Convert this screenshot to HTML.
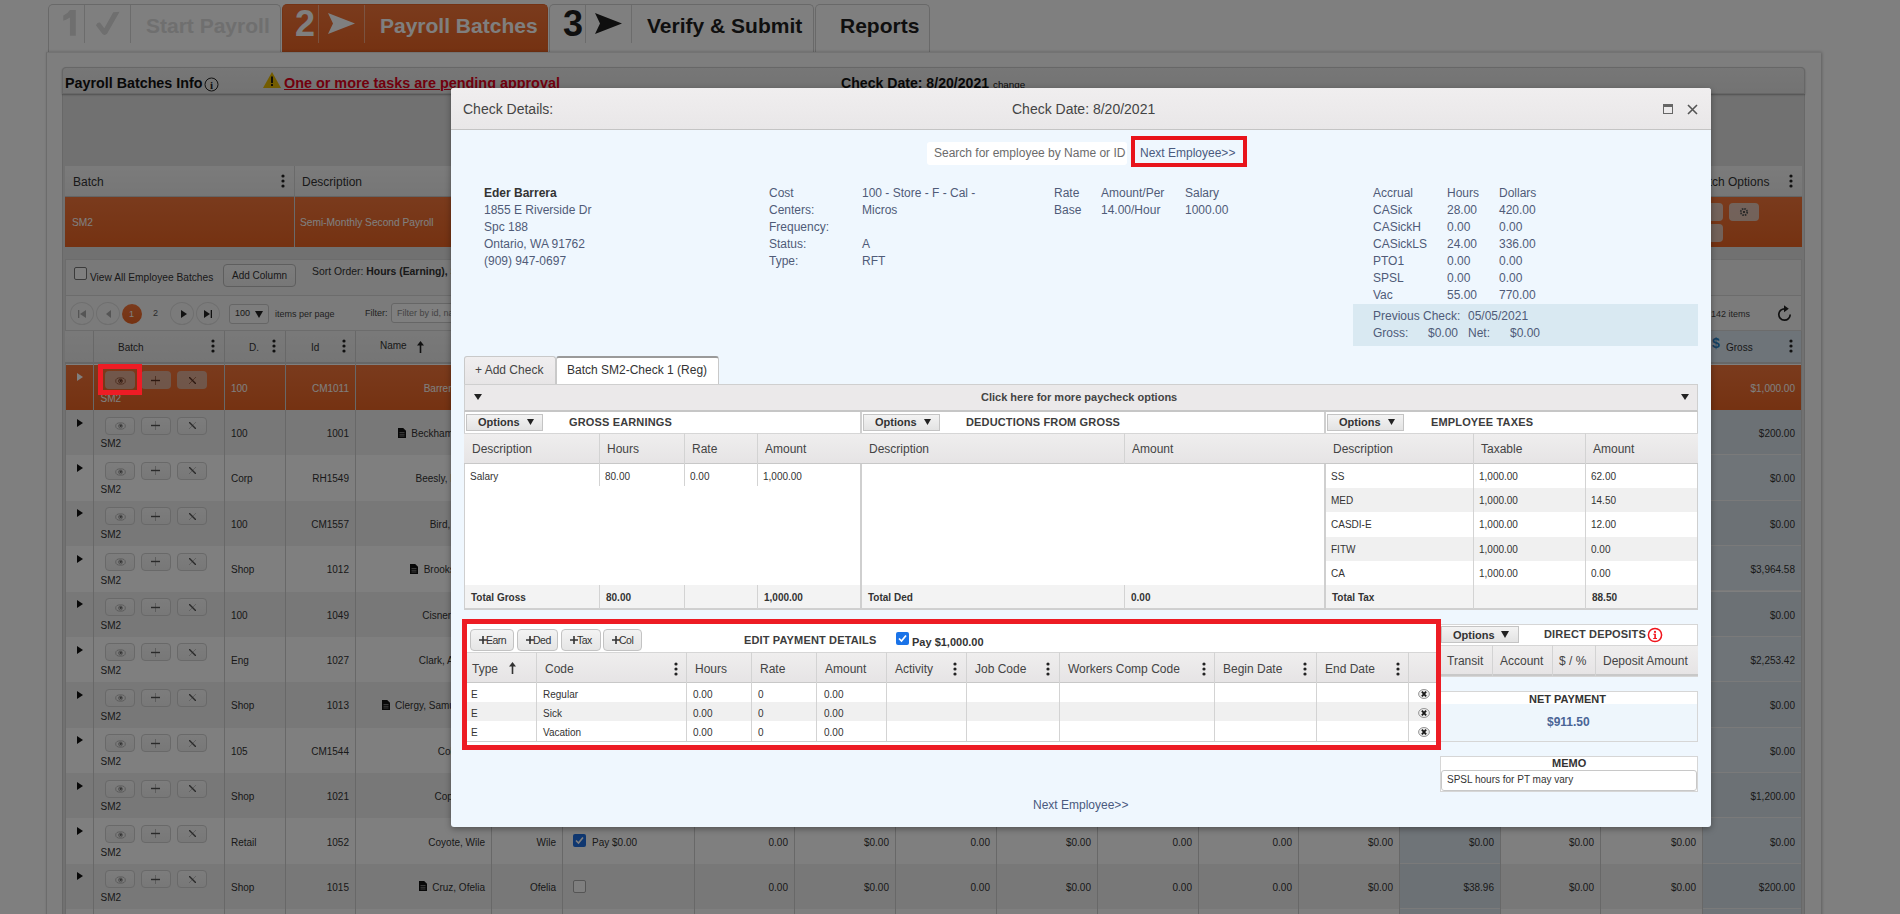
<!DOCTYPE html><html><head><meta charset="utf-8"><style>
*{box-sizing:border-box;margin:0;padding:0}
html,body{width:1900px;height:914px;overflow:hidden;background:#fff;font-family:"Liberation Sans",sans-serif;color:#333}
.a{position:absolute}
.t{position:absolute;white-space:nowrap;line-height:1}
.bg{position:absolute;left:0;top:0;width:1900px;height:914px;overflow:hidden}
.ov{position:absolute;left:0;top:0;width:1900px;height:914px;background:rgba(0,0,0,0.5)}
.tab{position:absolute;top:4px;height:48px;border:1px solid #d2d2d2;border-bottom:none;border-radius:5px 5px 0 0;background:#fff}
.tab .num{position:absolute;top:1px;font:bold 36px "Liberation Sans";line-height:1}
.tab .dv{position:absolute;top:0px;width:1px;height:38px;background:#d0d0d0}
.tab .lbl{position:absolute;top:10px;font:bold 21px "Liberation Sans";line-height:1}
.orange{background:linear-gradient(#f5763a,#ea6424)}
.modal{position:absolute;left:451px;top:88px;width:1260px;height:739px;background:#eff7fe;border-radius:3px;box-shadow:0 2px 6px rgba(0,0,0,0.35);overflow:hidden}
.mh{position:absolute;left:0;top:0;width:1260px;height:42px;background:linear-gradient(#f0eeef,#e9e7e8);border-bottom:1px solid #c4c4c4}
.info{font:12px "Liberation Sans";color:#4f5b78}
.th{position:absolute;background:linear-gradient(#efeded,#e6e4e5);border-bottom:1px solid #c9c9c9;font:12px "Liberation Sans";color:#444}
.btn{position:absolute;border:1px solid #bdbdbd;border-radius:4px;background:linear-gradient(#f4f4f4,#e4e4e4)}
</style></head><body>
<div class="bg">
<div class="tab" style="left:48px;width:233px;">
<svg class="a" style="left:0;top:0" width="40" height="40" viewBox="0 0 40 40"><path d="M20.9 4.9 H26.8 V30.7 H20.9 V12.5 Q17.5 14.8 14.3 15.8 V10.6 Q18.5 8.8 20.9 4.9 Z" fill="#dedede"/></svg>
<div class="dv" style="left:35px;background:#d8d8d8"></div>
<div class="dv" style="left:81px;background:#d8d8d8"></div>
<svg class="a" style="left:47px;top:6px" width="24" height="25" viewBox="0 0 24 25"><path d="M0 14.5 Q1 11 4 11.5 L8.3 17.3 L17.2 1.3 L23.6 0.8 L11.2 22.6 Q9 25 6.5 23 Z" fill="#dedede"/></svg>
<div class="lbl" style="left:97px;color:#dedede">Start Payroll</div>
</div>
<div class="tab orange" style="left:282px;width:266px;border-color:#e8662a;">
<div class="num" style="left:12px;color:#ffffff">2</div>
<div class="dv" style="left:35px;background:rgba(255,255,255,0.4)"></div>
<div class="dv" style="left:81px;background:rgba(255,255,255,0.4)"></div>
<svg class="a" style="left:45px;top:8px" width="27" height="21" viewBox="0 0 27 21"><path d="M0 0 L27 10.5 L0 21 L5 10.5 Z" fill="#ffffff"/></svg>
<div class="lbl" style="left:97px;color:#ffffff">Payroll Batches</div>
</div>
<div class="tab" style="left:549px;width:265px;">
<div class="num" style="left:13px;color:#1e1e1e">3</div>
<div class="dv" style="left:35px;background:#d8d8d8"></div>
<div class="dv" style="left:81px;background:#d8d8d8"></div>
<svg class="a" style="left:45px;top:8px" width="27" height="21" viewBox="0 0 27 21"><path d="M0 0 L27 10.5 L0 21 L5 10.5 Z" fill="#1e1e1e"/></svg>
<div class="lbl" style="left:97px;color:#1e1e1e">Verify &amp; Submit</div>
</div>
<div class="tab" style="left:815px;width:115px;">
<div class="lbl" style="left:24px;color:#1e1e1e">Reports</div>
</div>
<div class="a" style="left:46px;top:52px;width:1775px;height:870px;background:#fdfdfd;border-left:1px solid #d8d8d8;border-top:1px solid #e6e6e6;box-shadow:1px 0 3px rgba(0,0,0,0.25)"></div>
<div class="a" style="left:62px;top:67px;width:1743px;height:860px;background:#e3e3e3;border:1px solid #d0d0d0;border-radius:4px 4px 0 0"></div>
<div class="a" style="left:62px;top:67px;width:1743px;height:27px;background:linear-gradient(#eeeeee,#e6e6e6);border:1px solid #cfcfcf;border-radius:4px 4px 0 0;box-shadow:0 1px 2px rgba(0,0,0,0.3)"></div>
<div class="t" style="left:65px;top:75px;font:bold 14.3px 'Liberation Sans';color:#111;">Payroll Batches Info</div>
<svg class="a" style="left:204px;top:77px" width="15" height="15" viewBox="0 0 15 15"><circle cx="7.5" cy="7.5" r="6.5" fill="none" stroke="#222" stroke-width="1"/><text x="7.5" y="12" text-anchor="middle" font-family="Liberation Serif" font-size="11" font-weight="bold" fill="#222">i</text></svg>
<svg class="a" style="left:263px;top:72px" width="18" height="16" viewBox="0 0 18 16"><path d="M9 0 L18 16 L0 16 Z" fill="#e6b800"/><rect x="8.1" y="4.5" width="1.8" height="6.5" fill="#111"/><rect x="8.1" y="12" width="1.8" height="2" fill="#111"/></svg>
<div class="t" style="left:284px;top:75px;font:bold 14.4px 'Liberation Sans';color:#e3001b;text-decoration:underline">One or more tasks are pending approval</div>
<div class="t" style="left:841px;top:75px;font:bold 14.1px 'Liberation Sans';color:#111;">Check Date: 8/20/2021 <span style="font:normal 9.8px 'Liberation Sans'">change</span></div>
<div class="a" style="left:65px;top:166px;width:1737px;height:81px;background:#fff;border:1px solid #d5d5d5"></div>
<div class="th" style="left:65px;top:166px;width:1737px;height:31px;background:linear-gradient(#f7f7f7,#ededed)"></div>
<div class="t" style="left:73px;top:175px;font:12px 'Liberation Sans';color:#333;">Batch</div>
<div class="t" style="left:302px;top:175px;font:12px 'Liberation Sans';color:#333;">Description</div>
<div class="t" style="left:1694px;top:175px;font:12px 'Liberation Sans';color:#333;">Batch Options</div>
<svg class="a" style="left:281px;top:174px" width="4" height="14" viewBox="0 0 4 14"><circle cx="2" cy="2" r="1.6" fill="#222"/><circle cx="2" cy="7" r="1.6" fill="#222"/><circle cx="2" cy="12" r="1.6" fill="#222"/></svg>
<svg class="a" style="left:1789px;top:174px" width="4" height="14" viewBox="0 0 4 14"><circle cx="2" cy="2" r="1.6" fill="#222"/><circle cx="2" cy="7" r="1.6" fill="#222"/><circle cx="2" cy="12" r="1.6" fill="#222"/></svg>
<div class="a orange" style="left:65px;top:197px;width:1737px;height:50px"></div>
<div class="a" style="left:294px;top:166px;width:1px;height:81px;background:#d5d5d5"></div>
<div class="t" style="left:72px;top:217px;font:10.2px 'Liberation Sans';color:#fff;">SM2</div>
<div class="t" style="left:300px;top:217px;font:10.2px 'Liberation Sans';color:#fff;">Semi-Monthly Second Payroll</div>
<div class="a" style="left:1693px;top:203px;width:30px;height:18px;border-radius:4px;background:rgba(225,225,225,0.75)"></div>
<div class="a" style="left:1729px;top:203px;width:30px;height:18px;border-radius:4px;background:rgba(225,225,225,0.75)"></div>
<div class="a" style="left:1693px;top:224px;width:30px;height:18px;border-radius:4px;background:rgba(225,225,225,0.75)"></div>
<svg class="a" style="left:1739px;top:207px" width="10" height="10" viewBox="0 0 10 10"><circle cx="5" cy="5" r="3.2" fill="none" stroke="#555" stroke-width="1.8" stroke-dasharray="1.6 0.9"/><circle cx="5" cy="5" r="1.1" fill="#333"/></svg>
<div class="a" style="left:65px;top:259px;width:1737px;height:37px;background:#f2f2f2;border:1px solid #d8d8d8"></div>
<div class="a" style="left:74px;top:267px;width:13px;height:13px;background:#fff;border:1px solid #777;border-radius:2px"></div>
<div class="t" style="left:90px;top:272px;font:10.2px 'Liberation Sans';color:#333;">View All Employee Batches</div>
<div class="btn" style="left:223px;top:264px;width:73px;height:23px;background:linear-gradient(#fafafa,#efefef)"></div>
<div class="t" style="left:232px;top:270px;font:10px 'Liberation Sans';color:#333;">Add Column</div>
<div class="t" style="left:312px;top:266px;font:10.4px 'Liberation Sans';color:#333;">Sort Order: <b>Hours (Earning), Sick</b></div>
<div class="a" style="left:65px;top:296px;width:1737px;height:35px;background:#f7f7f7;border:1px solid #d8d8d8;border-top:none"></div>
<div class="a" style="left:70px;top:302px;width:24px;height:23px;border-radius:50%;border:1px solid #dedede"></div>
<div class="a" style="left:96px;top:302px;width:24px;height:23px;border-radius:50%;border:1px solid #dedede"></div>
<div class="a" style="left:170px;top:302px;width:24px;height:23px;border-radius:50%;border:1px solid #dedede"></div>
<div class="a" style="left:196px;top:302px;width:24px;height:23px;border-radius:50%;border:1px solid #dedede"></div>
<svg class="a" style="left:77px;top:309px" width="10" height="10" viewBox="0 0 10 10"><rect x="1" y="1" width="1.3" height="8" fill="#aaa"/><path d="M9 1 L3 5 L9 9Z" fill="#aaa"/></svg>
<svg class="a" style="left:104px;top:309px" width="10" height="10" viewBox="0 0 10 10"><path d="M7 1 L2 5 L7 9Z" fill="#aaa"/></svg>
<div class="a orange" style="left:122px;top:304px;width:20px;height:20px;border-radius:50%"></div>
<div class="t" style="left:129px;top:309px;font:9px 'Liberation Sans';color:#fff;">1</div>
<div class="t" style="left:153px;top:308px;font:9px 'Liberation Sans';color:#555;">2</div>
<svg class="a" style="left:179px;top:309px" width="10" height="10" viewBox="0 0 10 10"><path d="M2 1 L8 5 L2 9Z" fill="#222"/></svg>
<svg class="a" style="left:203px;top:309px" width="10" height="10" viewBox="0 0 10 10"><path d="M1 1 L7 5 L1 9Z" fill="#222"/><rect x="7.7" y="1" width="1.3" height="8" fill="#222"/></svg>
<div class="a" style="left:229px;top:304px;width:40px;height:20px;border:1px solid #ccc;border-radius:3px;background:#fafafa"></div>
<div class="t" style="left:235px;top:308px;font:9px 'Liberation Sans';color:#333;">100</div>
<svg class="a" style="left:255px;top:311px" width="8" height="7" viewBox="0 0 8 7"><path d="M0 0 L8 0 L4 7Z" fill="#222"/></svg>
<div class="t" style="left:275px;top:309px;font:9px 'Liberation Sans';color:#444;">items per page</div>
<div class="t" style="left:365px;top:308px;font:9px 'Liberation Sans';color:#444;">Filter:</div>
<div class="a" style="left:391px;top:303px;width:200px;height:20px;border:1px solid #ccc;border-radius:3px;background:#fff"></div>
<div class="t" style="left:397px;top:308px;font:9px 'Liberation Sans';color:#888;">Filter by id, name</div>
<div class="t" style="right:150px;top:309px;font:9px 'Liberation Sans';color:#444;">1 - 100 of 142 items</div>
<svg class="a" style="left:1777px;top:305px" width="16" height="17" viewBox="0 0 16 17"><path d="M13.2 9.5 A5.7 5.7 0 1 1 8 3.8" fill="none" stroke="#222" stroke-width="1.7"/><path d="M7 0.3 L11.8 3.8 L7 7.3Z" fill="#222"/></svg>
<div class="a" style="left:65px;top:331px;width:1737px;height:600px;background:#fff;border-left:1px solid #d5d5d5"></div>
<div class="th" style="left:65px;top:331px;width:1737px;height:33px;background:linear-gradient(#f3f3f3,#ebebeb);border-bottom:2px solid #cfcfcf"></div>
<div class="a" style="left:1399px;top:331px;width:101px;height:31px;background:#dce8f2"></div>
<div class="a" style="left:1702px;top:331px;width:99px;height:31px;background:#dce8f2"></div>
<div class="t" style="left:118px;top:342px;font:10px 'Liberation Sans';color:#333;">Batch</div>
<svg class="a" style="left:211px;top:339px" width="4" height="14" viewBox="0 0 4 14"><circle cx="2" cy="2" r="1.6" fill="#222"/><circle cx="2" cy="7" r="1.6" fill="#222"/><circle cx="2" cy="12" r="1.6" fill="#222"/></svg>
<div class="t" style="left:249px;top:342px;font:10px 'Liberation Sans';color:#333;">D.</div>
<svg class="a" style="left:272px;top:339px" width="4" height="14" viewBox="0 0 4 14"><circle cx="2" cy="2" r="1.6" fill="#222"/><circle cx="2" cy="7" r="1.6" fill="#222"/><circle cx="2" cy="12" r="1.6" fill="#222"/></svg>
<div class="t" style="left:311px;top:342px;font:10px 'Liberation Sans';color:#333;">Id</div>
<svg class="a" style="left:342px;top:339px" width="4" height="14" viewBox="0 0 4 14"><circle cx="2" cy="2" r="1.6" fill="#222"/><circle cx="2" cy="7" r="1.6" fill="#222"/><circle cx="2" cy="12" r="1.6" fill="#222"/></svg>
<div class="t" style="left:380px;top:340px;font:10px 'Liberation Sans';color:#333;">Name</div>
<svg class="a" style="left:417px;top:341px" width="7" height="12" viewBox="0 0 7 12"><path d="M3.5 0 L7 4.5 L4.3 4.5 L4.3 12 L2.7 12 L2.7 4.5 L0 4.5Z" fill="#222"/></svg>
<div class="t" style="left:1712px;top:335px;font:bold 14px 'Liberation Sans';color:#2c7fc0;">$</div>
<div class="t" style="left:1726px;top:342px;font:10px 'Liberation Sans';color:#333;">Gross</div>
<svg class="a" style="left:1789px;top:339px" width="4" height="14" viewBox="0 0 4 14"><circle cx="2" cy="2" r="1.6" fill="#222"/><circle cx="2" cy="7" r="1.6" fill="#222"/><circle cx="2" cy="12" r="1.6" fill="#222"/></svg>
<div class="a orange" style="left:66px;top:364.60px;width:1736px;height:45.38px;"></div>
<svg class="a" style="left:77px;top:373.30px" width="6" height="8" viewBox="0 0 6 8"><path d="M0 0 L6 4 L0 8Z" fill="#ffffff"/></svg>
<div class="a" style="left:105px;top:371.20px;width:30px;height:18px;border-radius:4px;border:1px solid rgba(255,255,255,0);background:rgba(215,215,215,0.6)"></div>
<svg class="a" style="left:115px;top:376.80px" width="11" height="8" viewBox="0 0 11 8"><ellipse cx="5.5" cy="4" rx="4.8" ry="3.2" fill="none" stroke="#7a3a1e" stroke-width="0.8" opacity="0.8"/><circle cx="5.5" cy="4" r="2" fill="none" stroke="#7a3a1e" stroke-width="0.8"/><circle cx="5.7" cy="3.8" r="1.2" fill="#5a3020"/></svg>
<div class="a" style="left:141px;top:371.20px;width:30px;height:18px;border-radius:4px;border:1px solid rgba(255,255,255,0);background:rgba(215,215,215,0.6)"></div>
<svg class="a" style="left:151px;top:375.60px" width="9" height="9" viewBox="0 0 9 9"><path d="M4.5 0V9" stroke="#7a3a1e" stroke-width="0.9" opacity="0.7"/><path d="M0 4.5H9" stroke="#5a3020" stroke-width="1.4"/></svg>
<div class="a" style="left:177px;top:371.20px;width:30px;height:18px;border-radius:4px;border:1px solid rgba(255,255,255,0);background:rgba(215,215,215,0.6)"></div>
<svg class="a" style="left:188.5px;top:376.60px" width="7" height="7" viewBox="0 0 7 7"><path d="M7 0L0 7" stroke="#7a3a1e" stroke-width="0.8" opacity="0.7"/><path d="M0 0L7 7" stroke="#5a3020" stroke-width="1.4"/></svg>
<div class="t" style="left:100.5px;top:393.00px;font:10px 'Liberation Sans';color:#fff;">SM2</div>
<div class="t" style="left:231px;top:382.70px;font:10px 'Liberation Sans';color:#fff;">100</div>
<div class="t" style="right:1551px;top:382.70px;font:10px 'Liberation Sans';color:#fff;">CM1011</div>
<div class="t" style="left:423.7px;top:382.70px;font:10px 'Liberation Sans';color:#fff;">Barrera, Eder</div>
<div class="t" style="right:1344px;top:382.70px;font:10px 'Liberation Sans';color:#fff;">Eder</div>
<div class="t" style="right:1112px;top:382.70px;font:10px 'Liberation Sans';color:#fff;">0.00</div>
<div class="t" style="right:1011px;top:382.70px;font:10px 'Liberation Sans';color:#fff;">$0.00</div>
<div class="t" style="right:910px;top:382.70px;font:10px 'Liberation Sans';color:#fff;">0.00</div>
<div class="t" style="right:809px;top:382.70px;font:10px 'Liberation Sans';color:#fff;">$0.00</div>
<div class="t" style="right:708px;top:382.70px;font:10px 'Liberation Sans';color:#fff;">0.00</div>
<div class="t" style="right:608px;top:382.70px;font:10px 'Liberation Sans';color:#fff;">0.00</div>
<div class="t" style="right:507px;top:382.70px;font:10px 'Liberation Sans';color:#fff;">$0.00</div>
<div class="t" style="right:406px;top:382.70px;font:10px 'Liberation Sans';color:#fff;">$0.00</div>
<div class="t" style="right:306px;top:382.70px;font:10px 'Liberation Sans';color:#fff;">$0.00</div>
<div class="t" style="right:204px;top:382.70px;font:10px 'Liberation Sans';color:#fff;">$0.00</div>
<div class="t" style="right:105px;top:382.70px;font:10px 'Liberation Sans';color:#fff;">$1,000.00</div>
<div class="a " style="left:66px;top:409.98px;width:1736px;height:45.38px;background:#f0f0f0;"></div>
<div class="a" style="left:1399px;top:409.98px;width:101px;height:45.38px;background:#d9e3eb;border-bottom:1px solid #f4f4f4"></div>
<div class="a" style="left:1702px;top:409.98px;width:99px;height:45.38px;background:#d9e3eb;border-bottom:1px solid #f4f4f4"></div>
<svg class="a" style="left:77px;top:418.68px" width="6" height="8" viewBox="0 0 6 8"><path d="M0 0 L6 4 L0 8Z" fill="#111"/></svg>
<div class="a" style="left:105px;top:416.58px;width:30px;height:18px;border-radius:4px;border:1px solid #d2d2d2;background:linear-gradient(#fafafa,#f0f0f0)"></div>
<svg class="a" style="left:115px;top:422.18px" width="11" height="8" viewBox="0 0 11 8"><ellipse cx="5.5" cy="4" rx="4.8" ry="3.2" fill="none" stroke="#9a9a9a" stroke-width="0.8" opacity="0.8"/><circle cx="5.5" cy="4" r="2" fill="none" stroke="#9a9a9a" stroke-width="0.8"/><circle cx="5.7" cy="3.8" r="1.2" fill="#666"/></svg>
<div class="a" style="left:141px;top:416.58px;width:30px;height:18px;border-radius:4px;border:1px solid #d2d2d2;background:linear-gradient(#fafafa,#f0f0f0)"></div>
<svg class="a" style="left:151px;top:420.98px" width="9" height="9" viewBox="0 0 9 9"><path d="M4.5 0V9" stroke="#9a9a9a" stroke-width="0.9" opacity="0.7"/><path d="M0 4.5H9" stroke="#555" stroke-width="1.4"/></svg>
<div class="a" style="left:177px;top:416.58px;width:30px;height:18px;border-radius:4px;border:1px solid #d2d2d2;background:linear-gradient(#fafafa,#f0f0f0)"></div>
<svg class="a" style="left:188.5px;top:421.98px" width="7" height="7" viewBox="0 0 7 7"><path d="M7 0L0 7" stroke="#9a9a9a" stroke-width="0.8" opacity="0.7"/><path d="M0 0L7 7" stroke="#555" stroke-width="1.4"/></svg>
<div class="t" style="left:100.5px;top:438.38px;font:10px 'Liberation Sans';color:#333;">SM2</div>
<div class="t" style="left:231px;top:428.08px;font:10px 'Liberation Sans';color:#333;">100</div>
<div class="t" style="right:1551px;top:428.08px;font:10px 'Liberation Sans';color:#333;">1001</div>
<div class="t" style="left:411.3px;top:428.08px;font:10px 'Liberation Sans';color:#333;">Beckham, David</div>
<svg class="a" style="left:398px;top:427.58px" width="8" height="10" viewBox="0 0 8 10"><path d="M0 0H5.2L8 2.8V10H0Z" fill="#111"/><path d="M1.5 4.5H6.5M1.5 6.3H6.5M1.5 8H6.5" stroke="#fff" stroke-width="0.7" opacity="0.6"/></svg>
<div class="t" style="right:1344px;top:428.08px;font:10px 'Liberation Sans';color:#333;">David</div>
<div class="t" style="right:1112px;top:428.08px;font:10px 'Liberation Sans';color:#333;">0.00</div>
<div class="t" style="right:1011px;top:428.08px;font:10px 'Liberation Sans';color:#333;">$0.00</div>
<div class="t" style="right:910px;top:428.08px;font:10px 'Liberation Sans';color:#333;">0.00</div>
<div class="t" style="right:809px;top:428.08px;font:10px 'Liberation Sans';color:#333;">$0.00</div>
<div class="t" style="right:708px;top:428.08px;font:10px 'Liberation Sans';color:#333;">0.00</div>
<div class="t" style="right:608px;top:428.08px;font:10px 'Liberation Sans';color:#333;">0.00</div>
<div class="t" style="right:507px;top:428.08px;font:10px 'Liberation Sans';color:#333;">$0.00</div>
<div class="t" style="right:406px;top:428.08px;font:10px 'Liberation Sans';color:#333;">$0.00</div>
<div class="t" style="right:306px;top:428.08px;font:10px 'Liberation Sans';color:#333;">$0.00</div>
<div class="t" style="right:204px;top:428.08px;font:10px 'Liberation Sans';color:#333;">$0.00</div>
<div class="t" style="right:105px;top:428.08px;font:10px 'Liberation Sans';color:#333;">$200.00</div>
<div class="a " style="left:66px;top:455.36px;width:1736px;height:45.38px;background:#fff;"></div>
<div class="a" style="left:1399px;top:455.36px;width:101px;height:45.38px;background:#dfe9f1;border-bottom:1px solid #f4f4f4"></div>
<div class="a" style="left:1702px;top:455.36px;width:99px;height:45.38px;background:#dfe9f1;border-bottom:1px solid #f4f4f4"></div>
<svg class="a" style="left:77px;top:464.06px" width="6" height="8" viewBox="0 0 6 8"><path d="M0 0 L6 4 L0 8Z" fill="#111"/></svg>
<div class="a" style="left:105px;top:461.96px;width:30px;height:18px;border-radius:4px;border:1px solid #d2d2d2;background:linear-gradient(#fafafa,#f0f0f0)"></div>
<svg class="a" style="left:115px;top:467.56px" width="11" height="8" viewBox="0 0 11 8"><ellipse cx="5.5" cy="4" rx="4.8" ry="3.2" fill="none" stroke="#9a9a9a" stroke-width="0.8" opacity="0.8"/><circle cx="5.5" cy="4" r="2" fill="none" stroke="#9a9a9a" stroke-width="0.8"/><circle cx="5.7" cy="3.8" r="1.2" fill="#666"/></svg>
<div class="a" style="left:141px;top:461.96px;width:30px;height:18px;border-radius:4px;border:1px solid #d2d2d2;background:linear-gradient(#fafafa,#f0f0f0)"></div>
<svg class="a" style="left:151px;top:466.36px" width="9" height="9" viewBox="0 0 9 9"><path d="M4.5 0V9" stroke="#9a9a9a" stroke-width="0.9" opacity="0.7"/><path d="M0 4.5H9" stroke="#555" stroke-width="1.4"/></svg>
<div class="a" style="left:177px;top:461.96px;width:30px;height:18px;border-radius:4px;border:1px solid #d2d2d2;background:linear-gradient(#fafafa,#f0f0f0)"></div>
<svg class="a" style="left:188.5px;top:467.36px" width="7" height="7" viewBox="0 0 7 7"><path d="M7 0L0 7" stroke="#9a9a9a" stroke-width="0.8" opacity="0.7"/><path d="M0 0L7 7" stroke="#555" stroke-width="1.4"/></svg>
<div class="t" style="left:100.5px;top:483.76px;font:10px 'Liberation Sans';color:#333;">SM2</div>
<div class="t" style="left:231px;top:473.46px;font:10px 'Liberation Sans';color:#333;">Corp</div>
<div class="t" style="right:1551px;top:473.46px;font:10px 'Liberation Sans';color:#333;">RH1549</div>
<div class="t" style="left:415.5px;top:473.46px;font:10px 'Liberation Sans';color:#333;">Beesly, Pamela</div>
<div class="t" style="right:1344px;top:473.46px;font:10px 'Liberation Sans';color:#333;">Pamela</div>
<div class="t" style="right:1112px;top:473.46px;font:10px 'Liberation Sans';color:#333;">0.00</div>
<div class="t" style="right:1011px;top:473.46px;font:10px 'Liberation Sans';color:#333;">$0.00</div>
<div class="t" style="right:910px;top:473.46px;font:10px 'Liberation Sans';color:#333;">0.00</div>
<div class="t" style="right:809px;top:473.46px;font:10px 'Liberation Sans';color:#333;">$0.00</div>
<div class="t" style="right:708px;top:473.46px;font:10px 'Liberation Sans';color:#333;">0.00</div>
<div class="t" style="right:608px;top:473.46px;font:10px 'Liberation Sans';color:#333;">0.00</div>
<div class="t" style="right:507px;top:473.46px;font:10px 'Liberation Sans';color:#333;">$0.00</div>
<div class="t" style="right:406px;top:473.46px;font:10px 'Liberation Sans';color:#333;">$0.00</div>
<div class="t" style="right:306px;top:473.46px;font:10px 'Liberation Sans';color:#333;">$0.00</div>
<div class="t" style="right:204px;top:473.46px;font:10px 'Liberation Sans';color:#333;">$0.00</div>
<div class="t" style="right:105px;top:473.46px;font:10px 'Liberation Sans';color:#333;">$0.00</div>
<div class="a " style="left:66px;top:500.74px;width:1736px;height:45.38px;background:#f0f0f0;"></div>
<div class="a" style="left:1399px;top:500.74px;width:101px;height:45.38px;background:#d9e3eb;border-bottom:1px solid #f4f4f4"></div>
<div class="a" style="left:1702px;top:500.74px;width:99px;height:45.38px;background:#d9e3eb;border-bottom:1px solid #f4f4f4"></div>
<svg class="a" style="left:77px;top:509.44px" width="6" height="8" viewBox="0 0 6 8"><path d="M0 0 L6 4 L0 8Z" fill="#111"/></svg>
<div class="a" style="left:105px;top:507.34px;width:30px;height:18px;border-radius:4px;border:1px solid #d2d2d2;background:linear-gradient(#fafafa,#f0f0f0)"></div>
<svg class="a" style="left:115px;top:512.94px" width="11" height="8" viewBox="0 0 11 8"><ellipse cx="5.5" cy="4" rx="4.8" ry="3.2" fill="none" stroke="#9a9a9a" stroke-width="0.8" opacity="0.8"/><circle cx="5.5" cy="4" r="2" fill="none" stroke="#9a9a9a" stroke-width="0.8"/><circle cx="5.7" cy="3.8" r="1.2" fill="#666"/></svg>
<div class="a" style="left:141px;top:507.34px;width:30px;height:18px;border-radius:4px;border:1px solid #d2d2d2;background:linear-gradient(#fafafa,#f0f0f0)"></div>
<svg class="a" style="left:151px;top:511.74px" width="9" height="9" viewBox="0 0 9 9"><path d="M4.5 0V9" stroke="#9a9a9a" stroke-width="0.9" opacity="0.7"/><path d="M0 4.5H9" stroke="#555" stroke-width="1.4"/></svg>
<div class="a" style="left:177px;top:507.34px;width:30px;height:18px;border-radius:4px;border:1px solid #d2d2d2;background:linear-gradient(#fafafa,#f0f0f0)"></div>
<svg class="a" style="left:188.5px;top:512.74px" width="7" height="7" viewBox="0 0 7 7"><path d="M7 0L0 7" stroke="#9a9a9a" stroke-width="0.8" opacity="0.7"/><path d="M0 0L7 7" stroke="#555" stroke-width="1.4"/></svg>
<div class="t" style="left:100.5px;top:529.14px;font:10px 'Liberation Sans';color:#333;">SM2</div>
<div class="t" style="left:231px;top:518.84px;font:10px 'Liberation Sans';color:#333;">100</div>
<div class="t" style="right:1551px;top:518.84px;font:10px 'Liberation Sans';color:#333;">CM1557</div>
<div class="t" style="left:429.7px;top:518.84px;font:10px 'Liberation Sans';color:#333;">Bird, Larry</div>
<div class="t" style="right:1344px;top:518.84px;font:10px 'Liberation Sans';color:#333;">Larry</div>
<div class="t" style="right:1112px;top:518.84px;font:10px 'Liberation Sans';color:#333;">0.00</div>
<div class="t" style="right:1011px;top:518.84px;font:10px 'Liberation Sans';color:#333;">$0.00</div>
<div class="t" style="right:910px;top:518.84px;font:10px 'Liberation Sans';color:#333;">0.00</div>
<div class="t" style="right:809px;top:518.84px;font:10px 'Liberation Sans';color:#333;">$0.00</div>
<div class="t" style="right:708px;top:518.84px;font:10px 'Liberation Sans';color:#333;">0.00</div>
<div class="t" style="right:608px;top:518.84px;font:10px 'Liberation Sans';color:#333;">0.00</div>
<div class="t" style="right:507px;top:518.84px;font:10px 'Liberation Sans';color:#333;">$0.00</div>
<div class="t" style="right:406px;top:518.84px;font:10px 'Liberation Sans';color:#333;">$0.00</div>
<div class="t" style="right:306px;top:518.84px;font:10px 'Liberation Sans';color:#333;">$0.00</div>
<div class="t" style="right:204px;top:518.84px;font:10px 'Liberation Sans';color:#333;">$0.00</div>
<div class="t" style="right:105px;top:518.84px;font:10px 'Liberation Sans';color:#333;">$0.00</div>
<div class="a " style="left:66px;top:546.12px;width:1736px;height:45.38px;background:#fff;"></div>
<div class="a" style="left:1399px;top:546.12px;width:101px;height:45.38px;background:#dfe9f1;border-bottom:1px solid #f4f4f4"></div>
<div class="a" style="left:1702px;top:546.12px;width:99px;height:45.38px;background:#dfe9f1;border-bottom:1px solid #f4f4f4"></div>
<svg class="a" style="left:77px;top:554.82px" width="6" height="8" viewBox="0 0 6 8"><path d="M0 0 L6 4 L0 8Z" fill="#111"/></svg>
<div class="a" style="left:105px;top:552.72px;width:30px;height:18px;border-radius:4px;border:1px solid #d2d2d2;background:linear-gradient(#fafafa,#f0f0f0)"></div>
<svg class="a" style="left:115px;top:558.32px" width="11" height="8" viewBox="0 0 11 8"><ellipse cx="5.5" cy="4" rx="4.8" ry="3.2" fill="none" stroke="#9a9a9a" stroke-width="0.8" opacity="0.8"/><circle cx="5.5" cy="4" r="2" fill="none" stroke="#9a9a9a" stroke-width="0.8"/><circle cx="5.7" cy="3.8" r="1.2" fill="#666"/></svg>
<div class="a" style="left:141px;top:552.72px;width:30px;height:18px;border-radius:4px;border:1px solid #d2d2d2;background:linear-gradient(#fafafa,#f0f0f0)"></div>
<svg class="a" style="left:151px;top:557.12px" width="9" height="9" viewBox="0 0 9 9"><path d="M4.5 0V9" stroke="#9a9a9a" stroke-width="0.9" opacity="0.7"/><path d="M0 4.5H9" stroke="#555" stroke-width="1.4"/></svg>
<div class="a" style="left:177px;top:552.72px;width:30px;height:18px;border-radius:4px;border:1px solid #d2d2d2;background:linear-gradient(#fafafa,#f0f0f0)"></div>
<svg class="a" style="left:188.5px;top:558.12px" width="7" height="7" viewBox="0 0 7 7"><path d="M7 0L0 7" stroke="#9a9a9a" stroke-width="0.8" opacity="0.7"/><path d="M0 0L7 7" stroke="#555" stroke-width="1.4"/></svg>
<div class="t" style="left:100.5px;top:574.52px;font:10px 'Liberation Sans';color:#333;">SM2</div>
<div class="t" style="left:231px;top:564.22px;font:10px 'Liberation Sans';color:#333;">Shop</div>
<div class="t" style="right:1551px;top:564.22px;font:10px 'Liberation Sans';color:#333;">1012</div>
<div class="t" style="left:423.7px;top:564.22px;font:10px 'Liberation Sans';color:#333;">Brooks, Garth</div>
<svg class="a" style="left:410px;top:563.72px" width="8" height="10" viewBox="0 0 8 10"><path d="M0 0H5.2L8 2.8V10H0Z" fill="#111"/><path d="M1.5 4.5H6.5M1.5 6.3H6.5M1.5 8H6.5" stroke="#fff" stroke-width="0.7" opacity="0.6"/></svg>
<div class="t" style="right:1344px;top:564.22px;font:10px 'Liberation Sans';color:#333;">Garth</div>
<div class="t" style="right:1112px;top:564.22px;font:10px 'Liberation Sans';color:#333;">0.00</div>
<div class="t" style="right:1011px;top:564.22px;font:10px 'Liberation Sans';color:#333;">$0.00</div>
<div class="t" style="right:910px;top:564.22px;font:10px 'Liberation Sans';color:#333;">0.00</div>
<div class="t" style="right:809px;top:564.22px;font:10px 'Liberation Sans';color:#333;">$0.00</div>
<div class="t" style="right:708px;top:564.22px;font:10px 'Liberation Sans';color:#333;">0.00</div>
<div class="t" style="right:608px;top:564.22px;font:10px 'Liberation Sans';color:#333;">0.00</div>
<div class="t" style="right:507px;top:564.22px;font:10px 'Liberation Sans';color:#333;">$0.00</div>
<div class="t" style="right:406px;top:564.22px;font:10px 'Liberation Sans';color:#333;">$0.00</div>
<div class="t" style="right:306px;top:564.22px;font:10px 'Liberation Sans';color:#333;">$0.00</div>
<div class="t" style="right:204px;top:564.22px;font:10px 'Liberation Sans';color:#333;">$0.00</div>
<div class="t" style="right:105px;top:564.22px;font:10px 'Liberation Sans';color:#333;">$3,964.58</div>
<div class="a " style="left:66px;top:591.50px;width:1736px;height:45.38px;background:#f0f0f0;"></div>
<div class="a" style="left:1399px;top:591.50px;width:101px;height:45.38px;background:#d9e3eb;border-bottom:1px solid #f4f4f4"></div>
<div class="a" style="left:1702px;top:591.50px;width:99px;height:45.38px;background:#d9e3eb;border-bottom:1px solid #f4f4f4"></div>
<svg class="a" style="left:77px;top:600.20px" width="6" height="8" viewBox="0 0 6 8"><path d="M0 0 L6 4 L0 8Z" fill="#111"/></svg>
<div class="a" style="left:105px;top:598.10px;width:30px;height:18px;border-radius:4px;border:1px solid #d2d2d2;background:linear-gradient(#fafafa,#f0f0f0)"></div>
<svg class="a" style="left:115px;top:603.70px" width="11" height="8" viewBox="0 0 11 8"><ellipse cx="5.5" cy="4" rx="4.8" ry="3.2" fill="none" stroke="#9a9a9a" stroke-width="0.8" opacity="0.8"/><circle cx="5.5" cy="4" r="2" fill="none" stroke="#9a9a9a" stroke-width="0.8"/><circle cx="5.7" cy="3.8" r="1.2" fill="#666"/></svg>
<div class="a" style="left:141px;top:598.10px;width:30px;height:18px;border-radius:4px;border:1px solid #d2d2d2;background:linear-gradient(#fafafa,#f0f0f0)"></div>
<svg class="a" style="left:151px;top:602.50px" width="9" height="9" viewBox="0 0 9 9"><path d="M4.5 0V9" stroke="#9a9a9a" stroke-width="0.9" opacity="0.7"/><path d="M0 4.5H9" stroke="#555" stroke-width="1.4"/></svg>
<div class="a" style="left:177px;top:598.10px;width:30px;height:18px;border-radius:4px;border:1px solid #d2d2d2;background:linear-gradient(#fafafa,#f0f0f0)"></div>
<svg class="a" style="left:188.5px;top:603.50px" width="7" height="7" viewBox="0 0 7 7"><path d="M7 0L0 7" stroke="#9a9a9a" stroke-width="0.8" opacity="0.7"/><path d="M0 0L7 7" stroke="#555" stroke-width="1.4"/></svg>
<div class="t" style="left:100.5px;top:619.90px;font:10px 'Liberation Sans';color:#333;">SM2</div>
<div class="t" style="left:231px;top:609.60px;font:10px 'Liberation Sans';color:#333;">100</div>
<div class="t" style="right:1551px;top:609.60px;font:10px 'Liberation Sans';color:#333;">1049</div>
<div class="t" style="left:422.3px;top:609.60px;font:10px 'Liberation Sans';color:#333;">Cisneros, Henry</div>
<div class="t" style="right:1344px;top:609.60px;font:10px 'Liberation Sans';color:#333;">Henry</div>
<div class="t" style="right:1112px;top:609.60px;font:10px 'Liberation Sans';color:#333;">0.00</div>
<div class="t" style="right:1011px;top:609.60px;font:10px 'Liberation Sans';color:#333;">$0.00</div>
<div class="t" style="right:910px;top:609.60px;font:10px 'Liberation Sans';color:#333;">0.00</div>
<div class="t" style="right:809px;top:609.60px;font:10px 'Liberation Sans';color:#333;">$0.00</div>
<div class="t" style="right:708px;top:609.60px;font:10px 'Liberation Sans';color:#333;">0.00</div>
<div class="t" style="right:608px;top:609.60px;font:10px 'Liberation Sans';color:#333;">0.00</div>
<div class="t" style="right:507px;top:609.60px;font:10px 'Liberation Sans';color:#333;">$0.00</div>
<div class="t" style="right:406px;top:609.60px;font:10px 'Liberation Sans';color:#333;">$0.00</div>
<div class="t" style="right:306px;top:609.60px;font:10px 'Liberation Sans';color:#333;">$0.00</div>
<div class="t" style="right:204px;top:609.60px;font:10px 'Liberation Sans';color:#333;">$0.00</div>
<div class="t" style="right:105px;top:609.60px;font:10px 'Liberation Sans';color:#333;">$0.00</div>
<div class="a " style="left:66px;top:636.88px;width:1736px;height:45.38px;background:#fff;"></div>
<div class="a" style="left:1399px;top:636.88px;width:101px;height:45.38px;background:#dfe9f1;border-bottom:1px solid #f4f4f4"></div>
<div class="a" style="left:1702px;top:636.88px;width:99px;height:45.38px;background:#dfe9f1;border-bottom:1px solid #f4f4f4"></div>
<svg class="a" style="left:77px;top:645.58px" width="6" height="8" viewBox="0 0 6 8"><path d="M0 0 L6 4 L0 8Z" fill="#111"/></svg>
<div class="a" style="left:105px;top:643.48px;width:30px;height:18px;border-radius:4px;border:1px solid #d2d2d2;background:linear-gradient(#fafafa,#f0f0f0)"></div>
<svg class="a" style="left:115px;top:649.08px" width="11" height="8" viewBox="0 0 11 8"><ellipse cx="5.5" cy="4" rx="4.8" ry="3.2" fill="none" stroke="#9a9a9a" stroke-width="0.8" opacity="0.8"/><circle cx="5.5" cy="4" r="2" fill="none" stroke="#9a9a9a" stroke-width="0.8"/><circle cx="5.7" cy="3.8" r="1.2" fill="#666"/></svg>
<div class="a" style="left:141px;top:643.48px;width:30px;height:18px;border-radius:4px;border:1px solid #d2d2d2;background:linear-gradient(#fafafa,#f0f0f0)"></div>
<svg class="a" style="left:151px;top:647.88px" width="9" height="9" viewBox="0 0 9 9"><path d="M4.5 0V9" stroke="#9a9a9a" stroke-width="0.9" opacity="0.7"/><path d="M0 4.5H9" stroke="#555" stroke-width="1.4"/></svg>
<div class="a" style="left:177px;top:643.48px;width:30px;height:18px;border-radius:4px;border:1px solid #d2d2d2;background:linear-gradient(#fafafa,#f0f0f0)"></div>
<svg class="a" style="left:188.5px;top:648.88px" width="7" height="7" viewBox="0 0 7 7"><path d="M7 0L0 7" stroke="#9a9a9a" stroke-width="0.8" opacity="0.7"/><path d="M0 0L7 7" stroke="#555" stroke-width="1.4"/></svg>
<div class="t" style="left:100.5px;top:665.28px;font:10px 'Liberation Sans';color:#333;">SM2</div>
<div class="t" style="left:231px;top:654.98px;font:10px 'Liberation Sans';color:#333;">Eng</div>
<div class="t" style="right:1551px;top:654.98px;font:10px 'Liberation Sans';color:#333;">1027</div>
<div class="t" style="left:418.7px;top:654.98px;font:10px 'Liberation Sans';color:#333;">Clark, Arthur</div>
<div class="t" style="right:1344px;top:654.98px;font:10px 'Liberation Sans';color:#333;">Arthur</div>
<div class="t" style="right:1112px;top:654.98px;font:10px 'Liberation Sans';color:#333;">0.00</div>
<div class="t" style="right:1011px;top:654.98px;font:10px 'Liberation Sans';color:#333;">$0.00</div>
<div class="t" style="right:910px;top:654.98px;font:10px 'Liberation Sans';color:#333;">0.00</div>
<div class="t" style="right:809px;top:654.98px;font:10px 'Liberation Sans';color:#333;">$0.00</div>
<div class="t" style="right:708px;top:654.98px;font:10px 'Liberation Sans';color:#333;">0.00</div>
<div class="t" style="right:608px;top:654.98px;font:10px 'Liberation Sans';color:#333;">0.00</div>
<div class="t" style="right:507px;top:654.98px;font:10px 'Liberation Sans';color:#333;">$0.00</div>
<div class="t" style="right:406px;top:654.98px;font:10px 'Liberation Sans';color:#333;">$0.00</div>
<div class="t" style="right:306px;top:654.98px;font:10px 'Liberation Sans';color:#333;">$0.00</div>
<div class="t" style="right:204px;top:654.98px;font:10px 'Liberation Sans';color:#333;">$0.00</div>
<div class="t" style="right:105px;top:654.98px;font:10px 'Liberation Sans';color:#333;">$2,253.42</div>
<div class="a " style="left:66px;top:682.26px;width:1736px;height:45.38px;background:#f0f0f0;"></div>
<div class="a" style="left:1399px;top:682.26px;width:101px;height:45.38px;background:#d9e3eb;border-bottom:1px solid #f4f4f4"></div>
<div class="a" style="left:1702px;top:682.26px;width:99px;height:45.38px;background:#d9e3eb;border-bottom:1px solid #f4f4f4"></div>
<svg class="a" style="left:77px;top:690.96px" width="6" height="8" viewBox="0 0 6 8"><path d="M0 0 L6 4 L0 8Z" fill="#111"/></svg>
<div class="a" style="left:105px;top:688.86px;width:30px;height:18px;border-radius:4px;border:1px solid #d2d2d2;background:linear-gradient(#fafafa,#f0f0f0)"></div>
<svg class="a" style="left:115px;top:694.46px" width="11" height="8" viewBox="0 0 11 8"><ellipse cx="5.5" cy="4" rx="4.8" ry="3.2" fill="none" stroke="#9a9a9a" stroke-width="0.8" opacity="0.8"/><circle cx="5.5" cy="4" r="2" fill="none" stroke="#9a9a9a" stroke-width="0.8"/><circle cx="5.7" cy="3.8" r="1.2" fill="#666"/></svg>
<div class="a" style="left:141px;top:688.86px;width:30px;height:18px;border-radius:4px;border:1px solid #d2d2d2;background:linear-gradient(#fafafa,#f0f0f0)"></div>
<svg class="a" style="left:151px;top:693.26px" width="9" height="9" viewBox="0 0 9 9"><path d="M4.5 0V9" stroke="#9a9a9a" stroke-width="0.9" opacity="0.7"/><path d="M0 4.5H9" stroke="#555" stroke-width="1.4"/></svg>
<div class="a" style="left:177px;top:688.86px;width:30px;height:18px;border-radius:4px;border:1px solid #d2d2d2;background:linear-gradient(#fafafa,#f0f0f0)"></div>
<svg class="a" style="left:188.5px;top:694.26px" width="7" height="7" viewBox="0 0 7 7"><path d="M7 0L0 7" stroke="#9a9a9a" stroke-width="0.8" opacity="0.7"/><path d="M0 0L7 7" stroke="#555" stroke-width="1.4"/></svg>
<div class="t" style="left:100.5px;top:710.66px;font:10px 'Liberation Sans';color:#333;">SM2</div>
<div class="t" style="left:231px;top:700.36px;font:10px 'Liberation Sans';color:#333;">Shop</div>
<div class="t" style="right:1551px;top:700.36px;font:10px 'Liberation Sans';color:#333;">1013</div>
<div class="t" style="left:395.1px;top:700.36px;font:10px 'Liberation Sans';color:#333;">Clergy, Samuel</div>
<svg class="a" style="left:382px;top:699.86px" width="8" height="10" viewBox="0 0 8 10"><path d="M0 0H5.2L8 2.8V10H0Z" fill="#111"/><path d="M1.5 4.5H6.5M1.5 6.3H6.5M1.5 8H6.5" stroke="#fff" stroke-width="0.7" opacity="0.6"/></svg>
<div class="t" style="right:1344px;top:700.36px;font:10px 'Liberation Sans';color:#333;">Samuel</div>
<div class="t" style="right:1112px;top:700.36px;font:10px 'Liberation Sans';color:#333;">0.00</div>
<div class="t" style="right:1011px;top:700.36px;font:10px 'Liberation Sans';color:#333;">$0.00</div>
<div class="t" style="right:910px;top:700.36px;font:10px 'Liberation Sans';color:#333;">0.00</div>
<div class="t" style="right:809px;top:700.36px;font:10px 'Liberation Sans';color:#333;">$0.00</div>
<div class="t" style="right:708px;top:700.36px;font:10px 'Liberation Sans';color:#333;">0.00</div>
<div class="t" style="right:608px;top:700.36px;font:10px 'Liberation Sans';color:#333;">0.00</div>
<div class="t" style="right:507px;top:700.36px;font:10px 'Liberation Sans';color:#333;">$0.00</div>
<div class="t" style="right:406px;top:700.36px;font:10px 'Liberation Sans';color:#333;">$0.00</div>
<div class="t" style="right:306px;top:700.36px;font:10px 'Liberation Sans';color:#333;">$0.00</div>
<div class="t" style="right:204px;top:700.36px;font:10px 'Liberation Sans';color:#333;">$0.00</div>
<div class="t" style="right:105px;top:700.36px;font:10px 'Liberation Sans';color:#333;">$0.00</div>
<div class="a " style="left:66px;top:727.64px;width:1736px;height:45.38px;background:#fff;"></div>
<div class="a" style="left:1399px;top:727.64px;width:101px;height:45.38px;background:#dfe9f1;border-bottom:1px solid #f4f4f4"></div>
<div class="a" style="left:1702px;top:727.64px;width:99px;height:45.38px;background:#dfe9f1;border-bottom:1px solid #f4f4f4"></div>
<svg class="a" style="left:77px;top:736.34px" width="6" height="8" viewBox="0 0 6 8"><path d="M0 0 L6 4 L0 8Z" fill="#111"/></svg>
<div class="a" style="left:105px;top:734.24px;width:30px;height:18px;border-radius:4px;border:1px solid #d2d2d2;background:linear-gradient(#fafafa,#f0f0f0)"></div>
<svg class="a" style="left:115px;top:739.84px" width="11" height="8" viewBox="0 0 11 8"><ellipse cx="5.5" cy="4" rx="4.8" ry="3.2" fill="none" stroke="#9a9a9a" stroke-width="0.8" opacity="0.8"/><circle cx="5.5" cy="4" r="2" fill="none" stroke="#9a9a9a" stroke-width="0.8"/><circle cx="5.7" cy="3.8" r="1.2" fill="#666"/></svg>
<div class="a" style="left:141px;top:734.24px;width:30px;height:18px;border-radius:4px;border:1px solid #d2d2d2;background:linear-gradient(#fafafa,#f0f0f0)"></div>
<svg class="a" style="left:151px;top:738.64px" width="9" height="9" viewBox="0 0 9 9"><path d="M4.5 0V9" stroke="#9a9a9a" stroke-width="0.9" opacity="0.7"/><path d="M0 4.5H9" stroke="#555" stroke-width="1.4"/></svg>
<div class="a" style="left:177px;top:734.24px;width:30px;height:18px;border-radius:4px;border:1px solid #d2d2d2;background:linear-gradient(#fafafa,#f0f0f0)"></div>
<svg class="a" style="left:188.5px;top:739.64px" width="7" height="7" viewBox="0 0 7 7"><path d="M7 0L0 7" stroke="#9a9a9a" stroke-width="0.8" opacity="0.7"/><path d="M0 0L7 7" stroke="#555" stroke-width="1.4"/></svg>
<div class="t" style="left:100.5px;top:756.04px;font:10px 'Liberation Sans';color:#333;">SM2</div>
<div class="t" style="left:231px;top:745.74px;font:10px 'Liberation Sans';color:#333;">105</div>
<div class="t" style="right:1551px;top:745.74px;font:10px 'Liberation Sans';color:#333;">CM1544</div>
<div class="t" style="left:437.7px;top:745.74px;font:10px 'Liberation Sans';color:#333;">Cole, Nat</div>
<div class="t" style="right:1344px;top:745.74px;font:10px 'Liberation Sans';color:#333;">Nat</div>
<div class="t" style="right:1112px;top:745.74px;font:10px 'Liberation Sans';color:#333;">0.00</div>
<div class="t" style="right:1011px;top:745.74px;font:10px 'Liberation Sans';color:#333;">$0.00</div>
<div class="t" style="right:910px;top:745.74px;font:10px 'Liberation Sans';color:#333;">0.00</div>
<div class="t" style="right:809px;top:745.74px;font:10px 'Liberation Sans';color:#333;">$0.00</div>
<div class="t" style="right:708px;top:745.74px;font:10px 'Liberation Sans';color:#333;">0.00</div>
<div class="t" style="right:608px;top:745.74px;font:10px 'Liberation Sans';color:#333;">0.00</div>
<div class="t" style="right:507px;top:745.74px;font:10px 'Liberation Sans';color:#333;">$0.00</div>
<div class="t" style="right:406px;top:745.74px;font:10px 'Liberation Sans';color:#333;">$0.00</div>
<div class="t" style="right:306px;top:745.74px;font:10px 'Liberation Sans';color:#333;">$0.00</div>
<div class="t" style="right:204px;top:745.74px;font:10px 'Liberation Sans';color:#333;">$0.00</div>
<div class="t" style="right:105px;top:745.74px;font:10px 'Liberation Sans';color:#333;">$0.00</div>
<div class="a " style="left:66px;top:773.02px;width:1736px;height:45.38px;background:#f0f0f0;"></div>
<div class="a" style="left:1399px;top:773.02px;width:101px;height:45.38px;background:#d9e3eb;border-bottom:1px solid #f4f4f4"></div>
<div class="a" style="left:1702px;top:773.02px;width:99px;height:45.38px;background:#d9e3eb;border-bottom:1px solid #f4f4f4"></div>
<svg class="a" style="left:77px;top:781.72px" width="6" height="8" viewBox="0 0 6 8"><path d="M0 0 L6 4 L0 8Z" fill="#111"/></svg>
<div class="a" style="left:105px;top:779.62px;width:30px;height:18px;border-radius:4px;border:1px solid #d2d2d2;background:linear-gradient(#fafafa,#f0f0f0)"></div>
<svg class="a" style="left:115px;top:785.22px" width="11" height="8" viewBox="0 0 11 8"><ellipse cx="5.5" cy="4" rx="4.8" ry="3.2" fill="none" stroke="#9a9a9a" stroke-width="0.8" opacity="0.8"/><circle cx="5.5" cy="4" r="2" fill="none" stroke="#9a9a9a" stroke-width="0.8"/><circle cx="5.7" cy="3.8" r="1.2" fill="#666"/></svg>
<div class="a" style="left:141px;top:779.62px;width:30px;height:18px;border-radius:4px;border:1px solid #d2d2d2;background:linear-gradient(#fafafa,#f0f0f0)"></div>
<svg class="a" style="left:151px;top:784.02px" width="9" height="9" viewBox="0 0 9 9"><path d="M4.5 0V9" stroke="#9a9a9a" stroke-width="0.9" opacity="0.7"/><path d="M0 4.5H9" stroke="#555" stroke-width="1.4"/></svg>
<div class="a" style="left:177px;top:779.62px;width:30px;height:18px;border-radius:4px;border:1px solid #d2d2d2;background:linear-gradient(#fafafa,#f0f0f0)"></div>
<svg class="a" style="left:188.5px;top:785.02px" width="7" height="7" viewBox="0 0 7 7"><path d="M7 0L0 7" stroke="#9a9a9a" stroke-width="0.8" opacity="0.7"/><path d="M0 0L7 7" stroke="#555" stroke-width="1.4"/></svg>
<div class="t" style="left:100.5px;top:801.42px;font:10px 'Liberation Sans';color:#333;">SM2</div>
<div class="t" style="left:231px;top:791.12px;font:10px 'Liberation Sans';color:#333;">Shop</div>
<div class="t" style="right:1551px;top:791.12px;font:10px 'Liberation Sans';color:#333;">1021</div>
<div class="t" style="left:434.5px;top:791.12px;font:10px 'Liberation Sans';color:#333;">Copeland, Stewart</div>
<div class="t" style="right:1344px;top:791.12px;font:10px 'Liberation Sans';color:#333;">Stewart</div>
<div class="t" style="right:1112px;top:791.12px;font:10px 'Liberation Sans';color:#333;">0.00</div>
<div class="t" style="right:1011px;top:791.12px;font:10px 'Liberation Sans';color:#333;">$0.00</div>
<div class="t" style="right:910px;top:791.12px;font:10px 'Liberation Sans';color:#333;">0.00</div>
<div class="t" style="right:809px;top:791.12px;font:10px 'Liberation Sans';color:#333;">$0.00</div>
<div class="t" style="right:708px;top:791.12px;font:10px 'Liberation Sans';color:#333;">0.00</div>
<div class="t" style="right:608px;top:791.12px;font:10px 'Liberation Sans';color:#333;">0.00</div>
<div class="t" style="right:507px;top:791.12px;font:10px 'Liberation Sans';color:#333;">$0.00</div>
<div class="t" style="right:406px;top:791.12px;font:10px 'Liberation Sans';color:#333;">$0.00</div>
<div class="t" style="right:306px;top:791.12px;font:10px 'Liberation Sans';color:#333;">$0.00</div>
<div class="t" style="right:204px;top:791.12px;font:10px 'Liberation Sans';color:#333;">$0.00</div>
<div class="t" style="right:105px;top:791.12px;font:10px 'Liberation Sans';color:#333;">$1,200.00</div>
<div class="a " style="left:66px;top:818.40px;width:1736px;height:45.38px;background:#fff;"></div>
<div class="a" style="left:1399px;top:818.40px;width:101px;height:45.38px;background:#dfe9f1;border-bottom:1px solid #f4f4f4"></div>
<div class="a" style="left:1702px;top:818.40px;width:99px;height:45.38px;background:#dfe9f1;border-bottom:1px solid #f4f4f4"></div>
<svg class="a" style="left:77px;top:827.10px" width="6" height="8" viewBox="0 0 6 8"><path d="M0 0 L6 4 L0 8Z" fill="#111"/></svg>
<div class="a" style="left:105px;top:825.00px;width:30px;height:18px;border-radius:4px;border:1px solid #d2d2d2;background:linear-gradient(#fafafa,#f0f0f0)"></div>
<svg class="a" style="left:115px;top:830.60px" width="11" height="8" viewBox="0 0 11 8"><ellipse cx="5.5" cy="4" rx="4.8" ry="3.2" fill="none" stroke="#9a9a9a" stroke-width="0.8" opacity="0.8"/><circle cx="5.5" cy="4" r="2" fill="none" stroke="#9a9a9a" stroke-width="0.8"/><circle cx="5.7" cy="3.8" r="1.2" fill="#666"/></svg>
<div class="a" style="left:141px;top:825.00px;width:30px;height:18px;border-radius:4px;border:1px solid #d2d2d2;background:linear-gradient(#fafafa,#f0f0f0)"></div>
<svg class="a" style="left:151px;top:829.40px" width="9" height="9" viewBox="0 0 9 9"><path d="M4.5 0V9" stroke="#9a9a9a" stroke-width="0.9" opacity="0.7"/><path d="M0 4.5H9" stroke="#555" stroke-width="1.4"/></svg>
<div class="a" style="left:177px;top:825.00px;width:30px;height:18px;border-radius:4px;border:1px solid #d2d2d2;background:linear-gradient(#fafafa,#f0f0f0)"></div>
<svg class="a" style="left:188.5px;top:830.40px" width="7" height="7" viewBox="0 0 7 7"><path d="M7 0L0 7" stroke="#9a9a9a" stroke-width="0.8" opacity="0.7"/><path d="M0 0L7 7" stroke="#555" stroke-width="1.4"/></svg>
<div class="t" style="left:100.5px;top:846.80px;font:10px 'Liberation Sans';color:#333;">SM2</div>
<div class="t" style="left:231px;top:836.50px;font:10px 'Liberation Sans';color:#333;">Retail</div>
<div class="t" style="right:1551px;top:836.50px;font:10px 'Liberation Sans';color:#333;">1052</div>
<div class="t" style="right:1415px;top:836.50px;font:10px 'Liberation Sans';color:#333;">Coyote, Wile</div>
<div class="t" style="right:1344px;top:836.50px;font:10px 'Liberation Sans';color:#333;">Wile</div>
<div class="a" style="left:573px;top:834.40px;width:13px;height:13px;background:#1f6ee0;border-radius:2px"></div>
<svg class="a" style="left:575px;top:836.40px" width="9" height="9" viewBox="0 0 9 9"><path d="M1 4.5 L3.5 7 L8 1.5" fill="none" stroke="#fff" stroke-width="1.6"/></svg>
<div class="t" style="left:592px;top:837.40px;font:10px 'Liberation Sans';color:#333;">Pay $0.00</div>
<div class="t" style="right:1112px;top:836.50px;font:10px 'Liberation Sans';color:#333;">0.00</div>
<div class="t" style="right:1011px;top:836.50px;font:10px 'Liberation Sans';color:#333;">$0.00</div>
<div class="t" style="right:910px;top:836.50px;font:10px 'Liberation Sans';color:#333;">0.00</div>
<div class="t" style="right:809px;top:836.50px;font:10px 'Liberation Sans';color:#333;">$0.00</div>
<div class="t" style="right:708px;top:836.50px;font:10px 'Liberation Sans';color:#333;">0.00</div>
<div class="t" style="right:608px;top:836.50px;font:10px 'Liberation Sans';color:#333;">0.00</div>
<div class="t" style="right:507px;top:836.50px;font:10px 'Liberation Sans';color:#333;">$0.00</div>
<div class="t" style="right:406px;top:836.50px;font:10px 'Liberation Sans';color:#333;">$0.00</div>
<div class="t" style="right:306px;top:836.50px;font:10px 'Liberation Sans';color:#333;">$0.00</div>
<div class="t" style="right:204px;top:836.50px;font:10px 'Liberation Sans';color:#333;">$0.00</div>
<div class="t" style="right:105px;top:836.50px;font:10px 'Liberation Sans';color:#333;">$0.00</div>
<div class="a " style="left:66px;top:863.78px;width:1736px;height:45.38px;background:#f0f0f0;"></div>
<div class="a" style="left:1399px;top:863.78px;width:101px;height:45.38px;background:#d9e3eb;border-bottom:1px solid #f4f4f4"></div>
<div class="a" style="left:1702px;top:863.78px;width:99px;height:45.38px;background:#d9e3eb;border-bottom:1px solid #f4f4f4"></div>
<svg class="a" style="left:77px;top:872.48px" width="6" height="8" viewBox="0 0 6 8"><path d="M0 0 L6 4 L0 8Z" fill="#111"/></svg>
<div class="a" style="left:105px;top:870.38px;width:30px;height:18px;border-radius:4px;border:1px solid #d2d2d2;background:linear-gradient(#fafafa,#f0f0f0)"></div>
<svg class="a" style="left:115px;top:875.98px" width="11" height="8" viewBox="0 0 11 8"><ellipse cx="5.5" cy="4" rx="4.8" ry="3.2" fill="none" stroke="#9a9a9a" stroke-width="0.8" opacity="0.8"/><circle cx="5.5" cy="4" r="2" fill="none" stroke="#9a9a9a" stroke-width="0.8"/><circle cx="5.7" cy="3.8" r="1.2" fill="#666"/></svg>
<div class="a" style="left:141px;top:870.38px;width:30px;height:18px;border-radius:4px;border:1px solid #d2d2d2;background:linear-gradient(#fafafa,#f0f0f0)"></div>
<svg class="a" style="left:151px;top:874.78px" width="9" height="9" viewBox="0 0 9 9"><path d="M4.5 0V9" stroke="#9a9a9a" stroke-width="0.9" opacity="0.7"/><path d="M0 4.5H9" stroke="#555" stroke-width="1.4"/></svg>
<div class="a" style="left:177px;top:870.38px;width:30px;height:18px;border-radius:4px;border:1px solid #d2d2d2;background:linear-gradient(#fafafa,#f0f0f0)"></div>
<svg class="a" style="left:188.5px;top:875.78px" width="7" height="7" viewBox="0 0 7 7"><path d="M7 0L0 7" stroke="#9a9a9a" stroke-width="0.8" opacity="0.7"/><path d="M0 0L7 7" stroke="#555" stroke-width="1.4"/></svg>
<div class="t" style="left:100.5px;top:892.18px;font:10px 'Liberation Sans';color:#333;">SM2</div>
<div class="t" style="left:231px;top:881.88px;font:10px 'Liberation Sans';color:#333;">Shop</div>
<div class="t" style="right:1551px;top:881.88px;font:10px 'Liberation Sans';color:#333;">1015</div>
<div class="t" style="right:1415px;top:881.88px;font:10px 'Liberation Sans';color:#333;">Cruz, Ofelia</div>
<svg class="a" style="left:419px;top:881.38px" width="8" height="10" viewBox="0 0 8 10"><path d="M0 0H5.2L8 2.8V10H0Z" fill="#111"/><path d="M1.5 4.5H6.5M1.5 6.3H6.5M1.5 8H6.5" stroke="#fff" stroke-width="0.7" opacity="0.6"/></svg>
<div class="t" style="right:1344px;top:881.88px;font:10px 'Liberation Sans';color:#333;">Ofelia</div>
<div class="a" style="left:573px;top:879.78px;width:13px;height:13px;background:#fff;border:1px solid #aaa;border-radius:2px"></div>
<div class="t" style="right:1112px;top:881.88px;font:10px 'Liberation Sans';color:#333;">0.00</div>
<div class="t" style="right:1011px;top:881.88px;font:10px 'Liberation Sans';color:#333;">$0.00</div>
<div class="t" style="right:910px;top:881.88px;font:10px 'Liberation Sans';color:#333;">0.00</div>
<div class="t" style="right:809px;top:881.88px;font:10px 'Liberation Sans';color:#333;">$0.00</div>
<div class="t" style="right:708px;top:881.88px;font:10px 'Liberation Sans';color:#333;">0.00</div>
<div class="t" style="right:608px;top:881.88px;font:10px 'Liberation Sans';color:#333;">0.00</div>
<div class="t" style="right:507px;top:881.88px;font:10px 'Liberation Sans';color:#333;">$0.00</div>
<div class="t" style="right:406px;top:881.88px;font:10px 'Liberation Sans';color:#333;">$38.96</div>
<div class="t" style="right:306px;top:881.88px;font:10px 'Liberation Sans';color:#333;">$0.00</div>
<div class="t" style="right:204px;top:881.88px;font:10px 'Liberation Sans';color:#333;">$0.00</div>
<div class="t" style="right:105px;top:881.88px;font:10px 'Liberation Sans';color:#333;">$200.00</div>
<div class="a " style="left:66px;top:909.16px;width:1736px;height:45.38px;background:#fff;"></div>
<div class="a" style="left:1399px;top:909.16px;width:101px;height:45.38px;background:#dfe9f1;border-bottom:1px solid #f4f4f4"></div>
<div class="a" style="left:1702px;top:909.16px;width:99px;height:45.38px;background:#dfe9f1;border-bottom:1px solid #f4f4f4"></div>
<svg class="a" style="left:77px;top:917.86px" width="6" height="8" viewBox="0 0 6 8"><path d="M0 0 L6 4 L0 8Z" fill="#111"/></svg>
<div class="a" style="left:105px;top:915.76px;width:30px;height:18px;border-radius:4px;border:1px solid #d2d2d2;background:linear-gradient(#fafafa,#f0f0f0)"></div>
<svg class="a" style="left:115px;top:921.36px" width="11" height="8" viewBox="0 0 11 8"><ellipse cx="5.5" cy="4" rx="4.8" ry="3.2" fill="none" stroke="#9a9a9a" stroke-width="0.8" opacity="0.8"/><circle cx="5.5" cy="4" r="2" fill="none" stroke="#9a9a9a" stroke-width="0.8"/><circle cx="5.7" cy="3.8" r="1.2" fill="#666"/></svg>
<div class="a" style="left:141px;top:915.76px;width:30px;height:18px;border-radius:4px;border:1px solid #d2d2d2;background:linear-gradient(#fafafa,#f0f0f0)"></div>
<svg class="a" style="left:151px;top:920.16px" width="9" height="9" viewBox="0 0 9 9"><path d="M4.5 0V9" stroke="#9a9a9a" stroke-width="0.9" opacity="0.7"/><path d="M0 4.5H9" stroke="#555" stroke-width="1.4"/></svg>
<div class="a" style="left:177px;top:915.76px;width:30px;height:18px;border-radius:4px;border:1px solid #d2d2d2;background:linear-gradient(#fafafa,#f0f0f0)"></div>
<svg class="a" style="left:188.5px;top:921.16px" width="7" height="7" viewBox="0 0 7 7"><path d="M7 0L0 7" stroke="#9a9a9a" stroke-width="0.8" opacity="0.7"/><path d="M0 0L7 7" stroke="#555" stroke-width="1.4"/></svg>
<div class="t" style="left:100.5px;top:937.56px;font:10px 'Liberation Sans';color:#333;">SM2</div>
<div class="t" style="left:231px;top:927.26px;font:10px 'Liberation Sans';color:#333;">Shop</div>
<div class="t" style="right:1551px;top:927.26px;font:10px 'Liberation Sans';color:#333;">1016</div>
<div class="t" style="right:1415px;top:927.26px;font:10px 'Liberation Sans';color:#333;">Davis, Miles</div>
<div class="t" style="right:1344px;top:927.26px;font:10px 'Liberation Sans';color:#333;">Miles</div>
<div class="t" style="right:1112px;top:927.26px;font:10px 'Liberation Sans';color:#333;">0.00</div>
<div class="t" style="right:1011px;top:927.26px;font:10px 'Liberation Sans';color:#333;">$0.00</div>
<div class="t" style="right:910px;top:927.26px;font:10px 'Liberation Sans';color:#333;">0.00</div>
<div class="t" style="right:809px;top:927.26px;font:10px 'Liberation Sans';color:#333;">$0.00</div>
<div class="t" style="right:708px;top:927.26px;font:10px 'Liberation Sans';color:#333;">0.00</div>
<div class="t" style="right:608px;top:927.26px;font:10px 'Liberation Sans';color:#333;">0.00</div>
<div class="t" style="right:507px;top:927.26px;font:10px 'Liberation Sans';color:#333;">$0.00</div>
<div class="t" style="right:406px;top:927.26px;font:10px 'Liberation Sans';color:#333;">$0.00</div>
<div class="t" style="right:306px;top:927.26px;font:10px 'Liberation Sans';color:#333;">$0.00</div>
<div class="t" style="right:204px;top:927.26px;font:10px 'Liberation Sans';color:#333;">$0.00</div>
<div class="t" style="right:105px;top:927.26px;font:10px 'Liberation Sans';color:#333;">$0.00</div>
<div class="a" style="left:93px;top:331px;width:1px;height:600px;background:#d0d0d0"></div>
<div class="a" style="left:224px;top:331px;width:1px;height:600px;background:#d0d0d0"></div>
<div class="a" style="left:285px;top:331px;width:1px;height:600px;background:#d0d0d0"></div>
<div class="a" style="left:355px;top:331px;width:1px;height:600px;background:#d0d0d0"></div>
<div class="a" style="left:491px;top:331px;width:1px;height:600px;background:#d0d0d0"></div>
<div class="a" style="left:562px;top:331px;width:1px;height:600px;background:#d0d0d0"></div>
<div class="a" style="left:694px;top:331px;width:1px;height:600px;background:#d0d0d0"></div>
<div class="a" style="left:794px;top:331px;width:1px;height:600px;background:#d0d0d0"></div>
<div class="a" style="left:895px;top:331px;width:1px;height:600px;background:#d0d0d0"></div>
<div class="a" style="left:996px;top:331px;width:1px;height:600px;background:#d0d0d0"></div>
<div class="a" style="left:1097px;top:331px;width:1px;height:600px;background:#d0d0d0"></div>
<div class="a" style="left:1198px;top:331px;width:1px;height:600px;background:#d0d0d0"></div>
<div class="a" style="left:1298px;top:331px;width:1px;height:600px;background:#d0d0d0"></div>
<div class="a" style="left:1399px;top:331px;width:1px;height:600px;background:#d0d0d0"></div>
<div class="a" style="left:1500px;top:331px;width:1px;height:600px;background:#d0d0d0"></div>
<div class="a" style="left:1600px;top:331px;width:1px;height:600px;background:#d0d0d0"></div>
<div class="a" style="left:1702px;top:331px;width:1px;height:600px;background:#d0d0d0"></div>
<div class="a" style="left:1801px;top:331px;width:1px;height:600px;background:#d0d0d0"></div>
</div>
<div class="ov"></div>
<div class="a" style="left:98px;top:364px;width:44px;height:31px;border:5px solid #ee1c25"></div>
<div class="modal">
<div class="mh"></div>
<div class="t" style="left:12px;top:13px;font:14px 'Liberation Sans';color:#444;">Check Details:</div>
<div class="t" style="left:561px;top:13px;font:14px 'Liberation Sans';color:#444;">Check Date: 8/20/2021</div>
<div class="a" style="left:1212px;top:16px;width:10px;height:10px;border:1px solid #666;border-bottom-width:1.5px;border-top-width:3px"></div>
<svg class="a" style="left:1236px;top:16px" width="11" height="11" viewBox="0 0 11 11"><path d="M1 1L10 10M10 1L1 10" stroke="#555" stroke-width="1.6"/></svg>
<div class="a" style="left:476px;top:54px;width:200px;height:23px;background:#fff;border-radius:3px"></div>
<div class="t" style="left:483px;top:58px;font:12px 'Liberation Sans';color:#6b6b6b;">Search for employee by Name or ID</div>
<div class="a" style="left:680px;top:48px;width:116px;height:31px;border:4px solid #e8141c"></div>
<div class="t" style="left:689px;top:58px;font:12px 'Liberation Sans';color:#4a5a7e;">Next Employee&gt;&gt;</div>
<div class="t" style="left:33px;top:98px;font:12px 'Liberation Sans';color:#4f5b78;"><b style="color:#333">Eder Barrera</b></div>
<div class="t" style="left:33px;top:115px;font:12px 'Liberation Sans';color:#4f5b78;">1855 E Riverside Dr</div>
<div class="t" style="left:33px;top:132px;font:12px 'Liberation Sans';color:#4f5b78;">Spc 188</div>
<div class="t" style="left:33px;top:149px;font:12px 'Liberation Sans';color:#4f5b78;">Ontario, WA 91762</div>
<div class="t" style="left:33px;top:166px;font:12px 'Liberation Sans';color:#4f5b78;">(909) 947-0697</div>
<div class="t" style="left:318px;top:98px;font:12px 'Liberation Sans';color:#4f5b78;">Cost</div>
<div class="t" style="left:411px;top:98px;font:12px 'Liberation Sans';color:#4f5b78;">100 - Store - F - Cal -</div>
<div class="t" style="left:318px;top:115px;font:12px 'Liberation Sans';color:#4f5b78;">Centers:</div>
<div class="t" style="left:411px;top:115px;font:12px 'Liberation Sans';color:#4f5b78;">Micros</div>
<div class="t" style="left:318px;top:132px;font:12px 'Liberation Sans';color:#4f5b78;">Frequency:</div>
<div class="t" style="left:411px;top:132px;font:12px 'Liberation Sans';color:#4f5b78;"></div>
<div class="t" style="left:318px;top:149px;font:12px 'Liberation Sans';color:#4f5b78;">Status:</div>
<div class="t" style="left:411px;top:149px;font:12px 'Liberation Sans';color:#4f5b78;">A</div>
<div class="t" style="left:318px;top:166px;font:12px 'Liberation Sans';color:#4f5b78;">Type:</div>
<div class="t" style="left:411px;top:166px;font:12px 'Liberation Sans';color:#4f5b78;">RFT</div>
<div class="t" style="left:603px;top:98px;font:12px 'Liberation Sans';color:#4f5b78;">Rate</div>
<div class="t" style="left:650px;top:98px;font:12px 'Liberation Sans';color:#4f5b78;">Amount/Per</div>
<div class="t" style="left:734px;top:98px;font:12px 'Liberation Sans';color:#4f5b78;">Salary</div>
<div class="t" style="left:603px;top:115px;font:12px 'Liberation Sans';color:#4f5b78;">Base</div>
<div class="t" style="left:650px;top:115px;font:12px 'Liberation Sans';color:#4f5b78;">14.00/Hour</div>
<div class="t" style="left:734px;top:115px;font:12px 'Liberation Sans';color:#4f5b78;">1000.00</div>
<div class="t" style="left:922px;top:98px;font:12px 'Liberation Sans';color:#4f5b78;">Accrual</div>
<div class="t" style="left:996px;top:98px;font:12px 'Liberation Sans';color:#4f5b78;">Hours</div>
<div class="t" style="left:1048px;top:98px;font:12px 'Liberation Sans';color:#4f5b78;">Dollars</div>
<div class="t" style="left:922px;top:115px;font:12px 'Liberation Sans';color:#4f5b78;">CASick</div>
<div class="t" style="left:996px;top:115px;font:12px 'Liberation Sans';color:#4f5b78;">28.00</div>
<div class="t" style="left:1048px;top:115px;font:12px 'Liberation Sans';color:#4f5b78;">420.00</div>
<div class="t" style="left:922px;top:132px;font:12px 'Liberation Sans';color:#4f5b78;">CASickH</div>
<div class="t" style="left:996px;top:132px;font:12px 'Liberation Sans';color:#4f5b78;">0.00</div>
<div class="t" style="left:1048px;top:132px;font:12px 'Liberation Sans';color:#4f5b78;">0.00</div>
<div class="t" style="left:922px;top:149px;font:12px 'Liberation Sans';color:#4f5b78;">CASickLS</div>
<div class="t" style="left:996px;top:149px;font:12px 'Liberation Sans';color:#4f5b78;">24.00</div>
<div class="t" style="left:1048px;top:149px;font:12px 'Liberation Sans';color:#4f5b78;">336.00</div>
<div class="t" style="left:922px;top:166px;font:12px 'Liberation Sans';color:#4f5b78;">PTO1</div>
<div class="t" style="left:996px;top:166px;font:12px 'Liberation Sans';color:#4f5b78;">0.00</div>
<div class="t" style="left:1048px;top:166px;font:12px 'Liberation Sans';color:#4f5b78;">0.00</div>
<div class="t" style="left:922px;top:183px;font:12px 'Liberation Sans';color:#4f5b78;">SPSL</div>
<div class="t" style="left:996px;top:183px;font:12px 'Liberation Sans';color:#4f5b78;">0.00</div>
<div class="t" style="left:1048px;top:183px;font:12px 'Liberation Sans';color:#4f5b78;">0.00</div>
<div class="t" style="left:922px;top:200px;font:12px 'Liberation Sans';color:#4f5b78;">Vac</div>
<div class="t" style="left:996px;top:200px;font:12px 'Liberation Sans';color:#4f5b78;">55.00</div>
<div class="t" style="left:1048px;top:200px;font:12px 'Liberation Sans';color:#4f5b78;">770.00</div>
<div class="a" style="left:902px;top:216px;width:345px;height:42px;background:#d9e9f2"></div>
<div class="t" style="left:922px;top:221px;font:12px 'Liberation Sans';color:#4f5b78;">Previous Check:</div>
<div class="t" style="left:1017px;top:221px;font:12px 'Liberation Sans';color:#4f5b78;">05/05/2021</div>
<div class="t" style="left:922px;top:238px;font:12px 'Liberation Sans';color:#4f5b78;">Gross:</div>
<div class="t" style="left:977px;top:238px;font:12px 'Liberation Sans';color:#4f5b78;">$0.00</div>
<div class="t" style="left:1017px;top:238px;font:12px 'Liberation Sans';color:#4f5b78;">Net:</div>
<div class="t" style="left:1059px;top:238px;font:12px 'Liberation Sans';color:#4f5b78;">$0.00</div>
<div class="a" style="left:13px;top:268px;width:92px;height:28px;background:linear-gradient(#f0eeef,#e7e5e6);border:1px solid #c9c9c9;border-bottom:none;border-radius:3px 3px 0 0"></div>
<div class="t" style="left:24px;top:275px;font:12px 'Liberation Sans';color:#444;">+ Add Check</div>
<div class="a" style="left:105px;top:268px;width:163px;height:29px;background:#fff;border:1px solid #c9c9c9;border-top:2px solid #9a9a9a;border-bottom:none;border-radius:3px 3px 0 0"></div>
<div class="t" style="left:116px;top:275px;font:12px 'Liberation Sans';color:#333;">Batch SM2-Check 1 (Reg)</div>
<div class="a" style="left:13px;top:296px;width:1234px;height:28px;background:#ebe9ea;border:1px solid #cfcfcf;border-bottom:2px solid #c6c6c6"></div>
<svg class="a" style="left:23px;top:306px" width="8" height="6" viewBox="0 0 8 6"><path d="M0 0H8L4 6Z" fill="#222"/></svg>
<div class="t" style="left:530px;top:303px;font:bold 11px 'Liberation Sans';color:#444;">Click here for more paycheck options</div>
<svg class="a" style="left:1230px;top:306px" width="8" height="6" viewBox="0 0 8 6"><path d="M0 0H8L4 6Z" fill="#222"/></svg>
<div class="a" style="left:13px;top:324px;width:397px;height:198px;background:#fff;border:1px solid #cfcfcf;border-top:none"></div>
<div class="a" style="left:15px;top:326px;width:77px;height:17px;background:linear-gradient(#f3f3f3,#e3e3e3);border:1px solid #c4c4c4"></div>
<div class="t" style="left:27px;top:328px;font:bold 11px 'Liberation Sans';color:#333;">Options</div>
<svg class="a" style="left:76px;top:331px" width="7" height="6" viewBox="0 0 7 6"><path d="M0 0H7L3.5 6Z" fill="#222"/></svg>
<div class="t" style="left:118px;top:328px;font:bold 11px 'Liberation Sans';color:#3c3c3c;letter-spacing:0.15px">GROSS EARNINGS</div>
<div class="a" style="left:13px;top:345px;width:397px;height:31px;background:linear-gradient(#efeeee,#e6e4e5);border-top:1px solid #d6d6d6;border-bottom:1px solid #c8c8c8"></div>
<div class="t" style="left:21px;top:354px;font:12px 'Liberation Sans';color:#444;">Description</div>
<div class="t" style="left:156px;top:354px;font:12px 'Liberation Sans';color:#444;">Hours</div>
<div class="t" style="left:241px;top:354px;font:12px 'Liberation Sans';color:#444;">Rate</div>
<div class="t" style="left:314px;top:354px;font:12px 'Liberation Sans';color:#444;">Amount</div>
<div class="t" style="left:19px;top:383.0px;font:10px 'Liberation Sans';color:#333;">Salary</div>
<div class="t" style="left:154px;top:383.0px;font:10px 'Liberation Sans';color:#333;">80.00</div>
<div class="t" style="left:239px;top:383.0px;font:10px 'Liberation Sans';color:#333;">0.00</div>
<div class="t" style="left:312px;top:383.0px;font:10px 'Liberation Sans';color:#333;">1,000.00</div>
<div class="a" style="left:14px;top:497px;width:395px;height:24px;background:#f3f3f3;border-bottom:1px solid #d0d0d0"></div>
<div class="t" style="left:20px;top:504px;font:bold 10px 'Liberation Sans';color:#333;">Total Gross</div>
<div class="t" style="left:155px;top:504px;font:bold 10px 'Liberation Sans';color:#333;">80.00</div>
<div class="t" style="left:240px;top:504px;font:bold 10px 'Liberation Sans';color:#333;"></div>
<div class="t" style="left:313px;top:504px;font:bold 10px 'Liberation Sans';color:#333;">1,000.00</div>
<div class="a" style="left:148px;top:345px;width:1px;height:176px;background:#d3d3d3"></div>
<div class="a" style="left:233px;top:345px;width:1px;height:176px;background:#d3d3d3"></div>
<div class="a" style="left:306px;top:345px;width:1px;height:176px;background:#d3d3d3"></div>
<div class="a" style="left:410px;top:324px;width:464px;height:198px;background:#fff;border:1px solid #cfcfcf;border-top:none"></div>
<div class="a" style="left:412px;top:326px;width:77px;height:17px;background:linear-gradient(#f3f3f3,#e3e3e3);border:1px solid #c4c4c4"></div>
<div class="t" style="left:424px;top:328px;font:bold 11px 'Liberation Sans';color:#333;">Options</div>
<svg class="a" style="left:473px;top:331px" width="7" height="6" viewBox="0 0 7 6"><path d="M0 0H7L3.5 6Z" fill="#222"/></svg>
<div class="t" style="left:515px;top:328px;font:bold 11px 'Liberation Sans';color:#3c3c3c;letter-spacing:0.15px">DEDUCTIONS FROM GROSS</div>
<div class="a" style="left:410px;top:345px;width:464px;height:31px;background:linear-gradient(#efeeee,#e6e4e5);border-top:1px solid #d6d6d6;border-bottom:1px solid #c8c8c8"></div>
<div class="t" style="left:418px;top:354px;font:12px 'Liberation Sans';color:#444;">Description</div>
<div class="t" style="left:681px;top:354px;font:12px 'Liberation Sans';color:#444;">Amount</div>
<div class="a" style="left:411px;top:497px;width:462px;height:24px;background:#f3f3f3;border-bottom:1px solid #d0d0d0"></div>
<div class="t" style="left:417px;top:504px;font:bold 10px 'Liberation Sans';color:#333;">Total Ded</div>
<div class="t" style="left:680px;top:504px;font:bold 10px 'Liberation Sans';color:#333;">0.00</div>
<div class="a" style="left:673px;top:345px;width:1px;height:176px;background:#d3d3d3"></div>
<div class="a" style="left:874px;top:324px;width:373px;height:198px;background:#fff;border:1px solid #cfcfcf;border-top:none"></div>
<div class="a" style="left:876px;top:326px;width:77px;height:17px;background:linear-gradient(#f3f3f3,#e3e3e3);border:1px solid #c4c4c4"></div>
<div class="t" style="left:888px;top:328px;font:bold 11px 'Liberation Sans';color:#333;">Options</div>
<svg class="a" style="left:937px;top:331px" width="7" height="6" viewBox="0 0 7 6"><path d="M0 0H7L3.5 6Z" fill="#222"/></svg>
<div class="t" style="left:980px;top:328px;font:bold 11px 'Liberation Sans';color:#3c3c3c;letter-spacing:0.15px">EMPLOYEE TAXES</div>
<div class="a" style="left:874px;top:345px;width:373px;height:31px;background:linear-gradient(#efeeee,#e6e4e5);border-top:1px solid #d6d6d6;border-bottom:1px solid #c8c8c8"></div>
<div class="t" style="left:882px;top:354px;font:12px 'Liberation Sans';color:#444;">Description</div>
<div class="t" style="left:1030px;top:354px;font:12px 'Liberation Sans';color:#444;">Taxable</div>
<div class="t" style="left:1142px;top:354px;font:12px 'Liberation Sans';color:#444;">Amount</div>
<div class="t" style="left:880px;top:383.0px;font:10px 'Liberation Sans';color:#333;">SS</div>
<div class="t" style="left:1028px;top:383.0px;font:10px 'Liberation Sans';color:#333;">1,000.00</div>
<div class="t" style="left:1140px;top:383.0px;font:10px 'Liberation Sans';color:#333;">62.00</div>
<div class="a" style="left:875px;top:400.2px;width:371px;height:24px;background:#f0f0f0"></div>
<div class="t" style="left:880px;top:407.2px;font:10px 'Liberation Sans';color:#333;">MED</div>
<div class="t" style="left:1028px;top:407.2px;font:10px 'Liberation Sans';color:#333;">1,000.00</div>
<div class="t" style="left:1140px;top:407.2px;font:10px 'Liberation Sans';color:#333;">14.50</div>
<div class="t" style="left:880px;top:431.4px;font:10px 'Liberation Sans';color:#333;">CASDI-E</div>
<div class="t" style="left:1028px;top:431.4px;font:10px 'Liberation Sans';color:#333;">1,000.00</div>
<div class="t" style="left:1140px;top:431.4px;font:10px 'Liberation Sans';color:#333;">12.00</div>
<div class="a" style="left:875px;top:448.6px;width:371px;height:24px;background:#f0f0f0"></div>
<div class="t" style="left:880px;top:455.6px;font:10px 'Liberation Sans';color:#333;">FITW</div>
<div class="t" style="left:1028px;top:455.6px;font:10px 'Liberation Sans';color:#333;">1,000.00</div>
<div class="t" style="left:1140px;top:455.6px;font:10px 'Liberation Sans';color:#333;">0.00</div>
<div class="t" style="left:880px;top:479.79999999999995px;font:10px 'Liberation Sans';color:#333;">CA</div>
<div class="t" style="left:1028px;top:479.79999999999995px;font:10px 'Liberation Sans';color:#333;">1,000.00</div>
<div class="t" style="left:1140px;top:479.79999999999995px;font:10px 'Liberation Sans';color:#333;">0.00</div>
<div class="a" style="left:875px;top:497px;width:371px;height:24px;background:#f3f3f3;border-bottom:1px solid #d0d0d0"></div>
<div class="t" style="left:881px;top:504px;font:bold 10px 'Liberation Sans';color:#333;">Total Tax</div>
<div class="t" style="left:1029px;top:504px;font:bold 10px 'Liberation Sans';color:#333;"></div>
<div class="t" style="left:1141px;top:504px;font:bold 10px 'Liberation Sans';color:#333;">88.50</div>
<div class="a" style="left:1022px;top:345px;width:1px;height:176px;background:#d3d3d3"></div>
<div class="a" style="left:1134px;top:345px;width:1px;height:176px;background:#d3d3d3"></div>
<div class="a" style="left:149px;top:398px;width:1px;height:99px;background:#fff"></div>
<div class="a" style="left:234px;top:398px;width:1px;height:99px;background:#fff"></div>
<div class="a" style="left:307px;top:398px;width:1px;height:99px;background:#fff"></div>
<div class="a" style="left:148px;top:398px;width:1px;height:99px;background:#fff"></div>
<div class="a" style="left:233px;top:398px;width:1px;height:99px;background:#fff"></div>
<div class="a" style="left:306px;top:398px;width:1px;height:99px;background:#fff"></div>
<div class="a" style="left:673px;top:376px;width:1px;height:121px;background:#fff"></div>
<div class="a" style="left:11px;top:531px;width:979px;height:131px;background:#fff"></div>
<div class="a" style="left:19px;top:541px;width:44px;height:22px;background:linear-gradient(#f3f3f3,#e5e5e5);border:1px solid #c3c3c3;border-radius:4px"></div>
<svg class="a" style="left:28px;top:548px" width="8" height="8" viewBox="0 0 8 8"><path d="M4 0V8M0 4H8" stroke="#333" stroke-width="1.6"/></svg>
<div class="t" style="left:35px;top:546px;font:10.5px 'Liberation Sans';color:#333;letter-spacing:-0.5px">Earn</div>
<div class="a" style="left:66px;top:541px;width:41px;height:22px;background:linear-gradient(#f3f3f3,#e5e5e5);border:1px solid #c3c3c3;border-radius:4px"></div>
<svg class="a" style="left:75px;top:548px" width="8" height="8" viewBox="0 0 8 8"><path d="M4 0V8M0 4H8" stroke="#333" stroke-width="1.6"/></svg>
<div class="t" style="left:82px;top:546px;font:10.5px 'Liberation Sans';color:#333;letter-spacing:-0.5px">Ded</div>
<div class="a" style="left:110px;top:541px;width:40px;height:22px;background:linear-gradient(#f3f3f3,#e5e5e5);border:1px solid #c3c3c3;border-radius:4px"></div>
<svg class="a" style="left:119px;top:548px" width="8" height="8" viewBox="0 0 8 8"><path d="M4 0V8M0 4H8" stroke="#333" stroke-width="1.6"/></svg>
<div class="t" style="left:126px;top:546px;font:10.5px 'Liberation Sans';color:#333;letter-spacing:-0.5px">Tax</div>
<div class="a" style="left:152px;top:541px;width:39px;height:22px;background:linear-gradient(#f3f3f3,#e5e5e5);border:1px solid #c3c3c3;border-radius:4px"></div>
<svg class="a" style="left:161px;top:548px" width="8" height="8" viewBox="0 0 8 8"><path d="M4 0V8M0 4H8" stroke="#333" stroke-width="1.6"/></svg>
<div class="t" style="left:168px;top:546px;font:10.5px 'Liberation Sans';color:#333;letter-spacing:-0.5px">Col</div>
<div class="t" style="left:293px;top:546px;font:bold 11px 'Liberation Sans';color:#3c3c3c;letter-spacing:0.15px">EDIT PAYMENT DETAILS</div>
<div class="a" style="left:445px;top:544px;width:13px;height:13px;background:#1a73e8;border-radius:2px"></div>
<svg class="a" style="left:447px;top:546px" width="9" height="9" viewBox="0 0 9 9"><path d="M1 4.5L3.5 7L8 1.5" fill="none" stroke="#fff" stroke-width="1.7"/></svg>
<div class="t" style="left:461px;top:548px;font:bold 11px 'Liberation Sans';color:#333;">Pay $1,000.00</div>
<div class="a" style="left:16px;top:564px;width:969px;height:31px;background:linear-gradient(#efeeee,#e6e4e5);border-top:1px solid #d6d6d6;border-bottom:1px solid #c8c8c8"></div>
<div class="t" style="left:21px;top:574px;font:12px 'Liberation Sans';color:#444;">Type</div>
<div class="t" style="left:94px;top:574px;font:12px 'Liberation Sans';color:#444;">Code</div>
<div class="t" style="left:244px;top:574px;font:12px 'Liberation Sans';color:#444;">Hours</div>
<div class="t" style="left:309px;top:574px;font:12px 'Liberation Sans';color:#444;">Rate</div>
<div class="t" style="left:374px;top:574px;font:12px 'Liberation Sans';color:#444;">Amount</div>
<div class="t" style="left:444px;top:574px;font:12px 'Liberation Sans';color:#444;">Activity</div>
<div class="t" style="left:524px;top:574px;font:12px 'Liberation Sans';color:#444;">Job Code</div>
<div class="t" style="left:617px;top:574px;font:12px 'Liberation Sans';color:#444;">Workers Comp Code</div>
<div class="t" style="left:772px;top:574px;font:12px 'Liberation Sans';color:#444;">Begin Date</div>
<div class="t" style="left:874px;top:574px;font:12px 'Liberation Sans';color:#444;">End Date</div>
<svg class="a" style="left:58px;top:574px" width="7" height="12" viewBox="0 0 7 12"><path d="M3.5 0L7 4.5H4.3V12H2.7V4.5H0Z" fill="#333"/></svg>
<svg class="a" style="left:223px;top:574px" width="4" height="14" viewBox="0 0 4 14"><circle cx="2" cy="2" r="1.6" fill="#222"/><circle cx="2" cy="7" r="1.6" fill="#222"/><circle cx="2" cy="12" r="1.6" fill="#222"/></svg>
<svg class="a" style="left:502px;top:574px" width="4" height="14" viewBox="0 0 4 14"><circle cx="2" cy="2" r="1.6" fill="#222"/><circle cx="2" cy="7" r="1.6" fill="#222"/><circle cx="2" cy="12" r="1.6" fill="#222"/></svg>
<svg class="a" style="left:595px;top:574px" width="4" height="14" viewBox="0 0 4 14"><circle cx="2" cy="2" r="1.6" fill="#222"/><circle cx="2" cy="7" r="1.6" fill="#222"/><circle cx="2" cy="12" r="1.6" fill="#222"/></svg>
<svg class="a" style="left:751px;top:574px" width="4" height="14" viewBox="0 0 4 14"><circle cx="2" cy="2" r="1.6" fill="#222"/><circle cx="2" cy="7" r="1.6" fill="#222"/><circle cx="2" cy="12" r="1.6" fill="#222"/></svg>
<svg class="a" style="left:852px;top:574px" width="4" height="14" viewBox="0 0 4 14"><circle cx="2" cy="2" r="1.6" fill="#222"/><circle cx="2" cy="7" r="1.6" fill="#222"/><circle cx="2" cy="12" r="1.6" fill="#222"/></svg>
<svg class="a" style="left:945px;top:574px" width="4" height="14" viewBox="0 0 4 14"><circle cx="2" cy="2" r="1.6" fill="#222"/><circle cx="2" cy="7" r="1.6" fill="#222"/><circle cx="2" cy="12" r="1.6" fill="#222"/></svg>
<div class="t" style="left:20px;top:601px;font:10px 'Liberation Sans';color:#333;">E</div>
<div class="t" style="left:92px;top:601px;font:10px 'Liberation Sans';color:#333;">Regular</div>
<div class="t" style="left:242px;top:601px;font:10px 'Liberation Sans';color:#333;">0.00</div>
<div class="t" style="left:307px;top:601px;font:10px 'Liberation Sans';color:#333;">0</div>
<div class="t" style="left:373px;top:601px;font:10px 'Liberation Sans';color:#333;">0.00</div>
<svg class="a" style="left:966.5px;top:601.0px" width="12" height="10" viewBox="0 0 12 10"><ellipse cx="6" cy="5" rx="5.4" ry="4.5" fill="#ececec" stroke="#8a8a8a" stroke-width="0.9"/><path d="M3.9 2.7L8.1 7.3M8.1 2.7L3.9 7.3" stroke="#1a1a1a" stroke-width="1.9"/></svg>
<div class="a" style="left:16px;top:614px;width:969px;height:19px;background:#f0f0f0"></div>
<div class="t" style="left:20px;top:620px;font:10px 'Liberation Sans';color:#333;">E</div>
<div class="t" style="left:92px;top:620px;font:10px 'Liberation Sans';color:#333;">Sick</div>
<div class="t" style="left:242px;top:620px;font:10px 'Liberation Sans';color:#333;">0.00</div>
<div class="t" style="left:307px;top:620px;font:10px 'Liberation Sans';color:#333;">0</div>
<div class="t" style="left:373px;top:620px;font:10px 'Liberation Sans';color:#333;">0.00</div>
<svg class="a" style="left:966.5px;top:620.0px" width="12" height="10" viewBox="0 0 12 10"><ellipse cx="6" cy="5" rx="5.4" ry="4.5" fill="#ececec" stroke="#8a8a8a" stroke-width="0.9"/><path d="M3.9 2.7L8.1 7.3M8.1 2.7L3.9 7.3" stroke="#1a1a1a" stroke-width="1.9"/></svg>
<div class="t" style="left:20px;top:639px;font:10px 'Liberation Sans';color:#333;">E</div>
<div class="t" style="left:92px;top:639px;font:10px 'Liberation Sans';color:#333;">Vacation</div>
<div class="t" style="left:242px;top:639px;font:10px 'Liberation Sans';color:#333;">0.00</div>
<div class="t" style="left:307px;top:639px;font:10px 'Liberation Sans';color:#333;">0</div>
<div class="t" style="left:373px;top:639px;font:10px 'Liberation Sans';color:#333;">0.00</div>
<svg class="a" style="left:966.5px;top:639.0px" width="12" height="10" viewBox="0 0 12 10"><ellipse cx="6" cy="5" rx="5.4" ry="4.5" fill="#ececec" stroke="#8a8a8a" stroke-width="0.9"/><path d="M3.9 2.7L8.1 7.3M8.1 2.7L3.9 7.3" stroke="#1a1a1a" stroke-width="1.9"/></svg>
<div class="a" style="left:16px;top:653px;width:969px;height:1px;background:#cfcfcf"></div>
<div class="a" style="left:85px;top:564px;width:1px;height:89px;background:#d3d3d3"></div>
<div class="a" style="left:235px;top:564px;width:1px;height:89px;background:#d3d3d3"></div>
<div class="a" style="left:300px;top:564px;width:1px;height:89px;background:#d3d3d3"></div>
<div class="a" style="left:365px;top:564px;width:1px;height:89px;background:#d3d3d3"></div>
<div class="a" style="left:435px;top:564px;width:1px;height:89px;background:#d3d3d3"></div>
<div class="a" style="left:515px;top:564px;width:1px;height:89px;background:#d3d3d3"></div>
<div class="a" style="left:608px;top:564px;width:1px;height:89px;background:#d3d3d3"></div>
<div class="a" style="left:763px;top:564px;width:1px;height:89px;background:#d3d3d3"></div>
<div class="a" style="left:865px;top:564px;width:1px;height:89px;background:#d3d3d3"></div>
<div class="a" style="left:957px;top:564px;width:1px;height:89px;background:#d3d3d3"></div>
<div class="a" style="left:989px;top:536px;width:258px;height:53px;background:#fff;border:1px solid #d6d6d6"></div>
<div class="a" style="left:990px;top:538px;width:78px;height:17px;background:linear-gradient(#f3f3f3,#e3e3e3);border:1px solid #c4c4c4"></div>
<div class="t" style="left:1002px;top:541px;font:bold 11px 'Liberation Sans';color:#333;">Options</div>
<svg class="a" style="left:1050px;top:543px" width="8" height="7" viewBox="0 0 8 7"><path d="M0 0H8L4 7Z" fill="#222"/></svg>
<div class="t" style="left:1093px;top:540px;font:bold 11px 'Liberation Sans';color:#3c3c3c;letter-spacing:0.15px">DIRECT DEPOSITS</div>
<svg class="a" style="left:1196px;top:539px" width="16" height="16" viewBox="0 0 16 16"><circle cx="8" cy="8" r="6.6" fill="none" stroke="#f0141c" stroke-width="1.5"/><circle cx="8" cy="4.9" r="1.1" fill="#f0141c"/><path d="M6.3 6.8H8.9V11H10V12H6.2V11H7.3V7.8H6.3Z" fill="#f0141c"/></svg>
<div class="a" style="left:989px;top:557px;width:258px;height:31px;background:linear-gradient(#efeeee,#e6e4e5);border-top:1px solid #d6d6d6;border-bottom:2px solid #c8c8c8"></div>
<div class="t" style="left:996px;top:566px;font:12px 'Liberation Sans';color:#444;">Transit</div>
<div class="t" style="left:1049px;top:566px;font:12px 'Liberation Sans';color:#444;">Account</div>
<div class="t" style="left:1108px;top:566px;font:12px 'Liberation Sans';color:#444;">$ / %</div>
<div class="t" style="left:1152px;top:566px;font:12px 'Liberation Sans';color:#444;">Deposit Amount</div>
<div class="a" style="left:1041px;top:557px;width:1px;height:31px;background:#d3d3d3"></div>
<div class="a" style="left:1101px;top:557px;width:1px;height:31px;background:#d3d3d3"></div>
<div class="a" style="left:1144px;top:557px;width:1px;height:31px;background:#d3d3d3"></div>
<div class="a" style="left:989px;top:603px;width:258px;height:51px;background:#eef6fc;border:1px solid #d6d6d6"></div>
<div class="a" style="left:990px;top:604px;width:256px;height:12px;background:#fff"></div>
<div class="t" style="left:1078px;top:605px;font:bold 11px 'Liberation Sans';color:#333;">NET PAYMENT</div>
<div class="t" style="left:1096px;top:627px;font:bold 12px 'Liberation Sans';color:#4a6596;">$911.50</div>
<div class="a" style="left:989px;top:668px;width:258px;height:36px;background:#fff;border:1px solid #d6d6d6"></div>
<div class="t" style="left:1101px;top:669px;font:bold 11px 'Liberation Sans';color:#333;">MEMO</div>
<div class="a" style="left:990px;top:682px;width:256px;height:21px;background:#fff;border:1px solid #c8c8c8;border-radius:3px"></div>
<div class="t" style="left:996px;top:686px;font:10px 'Liberation Sans';color:#333;">SPSL hours for PT may vary</div>
<div class="t" style="left:582px;top:710px;font:12px 'Liberation Sans';color:#4a5a7e;">Next Employee&gt;&gt;</div>
<div class="a" style="left:11px;top:531px;width:979px;height:131px;border:5px solid #ed1c24"></div>
</div>
</body></html>
